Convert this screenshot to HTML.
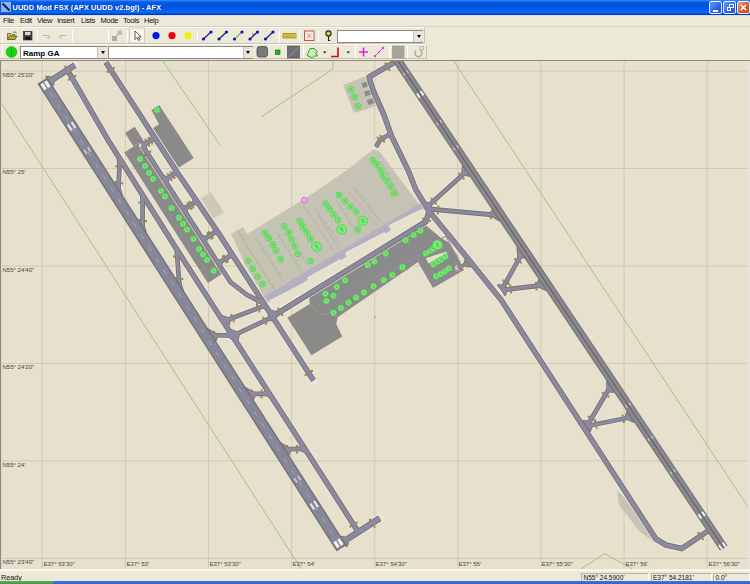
<!DOCTYPE html>
<html><head><meta charset="utf-8">
<style>
*{margin:0;padding:0;box-sizing:border-box}
html,body{width:750px;height:584px;overflow:hidden;background:#ECE9D8;font-family:"Liberation Sans",sans-serif}
.a{position:absolute}
#title{left:0;top:0;width:750px;height:15px;background:linear-gradient(#3d94ff 0px,#1668f0 1.3px,#0056e2 3px,#0055e0 8px,#0862f4 11px,#0a68f8 12.5px,#0044bc 14px,#003fae 15px)}
#title .t{left:12.5px;top:3px;color:#fff;font-size:7.4px;font-weight:bold;white-space:nowrap;letter-spacing:0.1px;text-shadow:1px 0 0 rgba(10,30,120,.5)}
.tb{top:1px;width:12.5px;height:12.5px;border:1px solid #e6eeff;border-radius:2px;background:linear-gradient(135deg,#6b9cf8,#2a64e4 60%,#2259d8)}
#menu{left:0;top:15px;width:750px;height:12px;background:#ECE9D8;border-bottom:1px solid #d8d4c2;border-top:1px solid #d4dcf0}
#menu span{position:absolute;top:0px;font-size:7.6px;color:#111;white-space:nowrap;letter-spacing:-0.3px}
.bar{left:0;width:750px;background:#ECE9D8;border-top:1px solid #fbfaf4;border-bottom:1px solid #c9c5b3}
.grip{width:1px;background:#c5c1ad;border-right:1px solid #fff}
.sep{width:1px;height:12px;background:#c5c1ad;border-right:1px solid #fff}
.combo{background:#fff;border:1px solid #7f9db9}
.dd{width:10px;background:#e8e6dc;border-left:1px solid #c8c4b4}
.dd:after{content:"";position:absolute;left:2.5px;top:4px;border-left:2.5px solid transparent;border-right:2.5px solid transparent;border-top:3px solid #000}
.dot{border-radius:50%}
#map{left:0;top:60px;width:750px;height:510px;background:#E6E0CD;overflow:hidden}
#status{left:0;top:570px;width:750px;height:11px;background:#ECE9D8;border-top:1px solid #fbfaf2}
#status span{position:absolute;font-size:6.5px;color:#111;white-space:nowrap}
.pan{top:2px;height:9px;border:1px solid #b8b4a2;border-right-color:#fff;border-bottom-color:#fff}
#task{left:0;top:581px;width:750px;height:3px;background:linear-gradient(#3a78e0,#2a62d6)}
.lab{position:absolute;font-size:6.1px;color:#4a4840;white-space:nowrap;letter-spacing:-0.05px}
</style></head><body>
<div id="title" class="a">
  <svg class="a" style="left:1px;top:2px" width="10" height="10" viewBox="0 0 10 10"><rect x="0" y="0" width="10" height="10" fill="#8fb0ee"/><line x1="1.5" y1="1.5" x2="8.5" y2="8.5" stroke="#102050" stroke-width="2"/></svg>
  <div class="t a">UUDD Mod FSX (APX UUDD v2.bgl) - AFX</div>
  <div class="tb a" style="left:709px"><div class="a" style="left:3px;top:7.5px;width:4.5px;height:2px;background:#fff"></div></div>
  <div class="tb a" style="left:723px"><div class="a" style="left:5px;top:2px;width:4.5px;height:4px;border:1px solid #fff;border-top-width:1.5px"></div><div class="a" style="left:2.5px;top:4.5px;width:4.5px;height:4px;border:1px solid #fff;border-top-width:1.5px;background:#3a70e8"></div></div>
  <div class="tb a" style="left:737px;background:linear-gradient(135deg,#f0a07c,#de5a2c 55%,#c84820)"><svg class="a" style="left:2px;top:2px" width="7" height="7"><path d="M0.8 0.8L6.2 6.2M6.2 0.8L0.8 6.2" stroke="#fff" stroke-width="1.4"/></svg></div>
</div>
<div id="menu" class="a">
  <span style="left:3px">File</span><span style="left:20px">Edit</span><span style="left:37px">View</span><span style="left:57px">Insert</span><span style="left:81px">Lists</span><span style="left:100.5px">Mode</span><span style="left:123px">Tools</span><span style="left:144px">Help</span>
</div>
<!-- toolbar 1 -->
<div class="a bar" style="top:27px;height:17px;width:425px;border-right:1px solid #c9c5b3">
  <div class="a grip" style="left:2px;top:2px;height:13px"></div>
  <svg class="a" style="left:0;top:-1px" width="750" height="17" viewBox="0 27 750 17">
    <!-- open -->
    <path d="M7.5 33.5h3.5l1 1h3v5h-7.5z" fill="#d8c060" stroke="#6a5a20" stroke-width="0.8"/>
    <path d="M7.5 39.5l2-3.5h7.5l-2 3.5z" fill="#a8b040" stroke="#5a5a20" stroke-width="0.8"/>
    <path d="M13 32.5q2-1.5 3.5 0.5" fill="none" stroke="#3a8a3a" stroke-width="1"/>
    <!-- save -->
    <rect x="23.5" y="31.5" width="8.5" height="8.5" fill="#3a3a3a" stroke="#222" stroke-width="0.6"/>
    <rect x="25" y="32" width="5.5" height="3.2" fill="#d8d8d0"/>
    <rect x="25.5" y="37" width="4.5" height="2.5" fill="#111"/>
    <!-- undo/redo gray -->
    <path d="M43 35.5h6v2.5h-2" fill="none" stroke="#b8b5a8" stroke-width="1"/>
    <path d="M66 35.5h-6v2.5h2" fill="none" stroke="#b8b5a8" stroke-width="1"/>
    <!-- gray squares -->
    <rect x="112" y="36" width="5" height="5" fill="#b0ada2"/><rect x="117.5" y="30.5" width="4.5" height="4.5" fill="#c0bdb2"/><path d="M116 36l3-2" stroke="#b0ada2"/>
    <!-- pressed button -->
    <rect x="129.5" y="28" width="15" height="15" fill="#f6f5f0" stroke="#c8c4b4" stroke-width="0.8"/>
    <path d="M135 31v8.5l2-2 1.6 3 1.3-0.6-1.5-3h2.8z" fill="#fff" stroke="#333" stroke-width="0.8"/>
    <circle cx="156" cy="35.6" r="3.6" fill="#0018e8"/>
    <circle cx="172" cy="35.6" r="3.6" fill="#ee0010"/>
    <circle cx="188" cy="35.6" r="3.6" fill="#f2ee10"/>
    <!-- line icons -->
    <g stroke-width="1.3">
      <line x1="203.5" y1="39" x2="211" y2="32" stroke="#1a2aa0"/><circle cx="203.5" cy="39" r="1.6" fill="#1010c0"/><circle cx="211" cy="32" r="1.6" fill="#1010c0"/>
      <line x1="219" y1="39" x2="226.5" y2="32" stroke="#1a2a70"/><circle cx="219" cy="39" r="1.6" fill="#1010c0"/><circle cx="226.5" cy="32" r="1.6" fill="#1010c0"/>
      <line x1="234.5" y1="39" x2="242" y2="32" stroke="#70c070"/><circle cx="234.5" cy="39" r="1.6" fill="#1010c0"/><circle cx="242" cy="32" r="1.6" fill="#1010c0"/>
      <line x1="250" y1="39" x2="257.5" y2="32" stroke="#1a2aa0"/><circle cx="250" cy="39" r="1.6" fill="#1010c0"/><circle cx="257.5" cy="32" r="1.6" fill="#1010c0"/><path d="M252 33l3 3m0-3l-3 3" stroke="#8a7a20" stroke-width="0.8"/>
      <line x1="265.5" y1="39" x2="273" y2="32" stroke="#1a2aa0"/><circle cx="265.5" cy="39" r="1.6" fill="#1010c0"/><circle cx="273" cy="32" r="1.6" fill="#1010c0"/>
    </g>
    <rect x="283" y="33.5" width="13" height="4.5" fill="#e8d840" stroke="#7a6a10" stroke-width="0.6"/>
    <path d="M284.5 35h10M284.5 36.8h10" stroke="#5a4a10" stroke-width="0.6" stroke-dasharray="1.2 0.8"/>
    <rect x="304.5" y="31" width="9.5" height="9.5" fill="#f4f0e8" stroke="#d05040" stroke-width="1"/>
    <path d="M307 33.5l4.5 4.5m0-4.5l-4.5 4.5" stroke="#d06050" stroke-width="0.8"/>
    <circle cx="328.5" cy="33.5" r="2.6" fill="#d8c850" stroke="#222" stroke-width="1.1"/>
    <path d="M328.5 36v4.5h1.8" stroke="#222" stroke-width="1.1" fill="none"/>
  </svg>
  <div class="a sep" style="left:37px;top:2px"></div>
  <div class="a sep" style="left:72px;top:2px"></div>
  <div class="a sep" style="left:108px;top:2px"></div>
  <div class="a sep" style="left:127px;top:2px"></div>
  <div class="a sep" style="left:197px;top:2px"></div>
  <div class="a sep" style="left:279px;top:2px"></div>
  <div class="a sep" style="left:299px;top:2px"></div>
  <div class="a sep" style="left:318px;top:2px"></div>
  <div class="a combo" style="left:337px;top:2px;width:86px;height:13px;border-color:#8c8a80"><div class="a dd" style="left:75px;top:0;height:11px"></div></div>
</div>
<!-- toolbar 2 -->
<div class="a bar" style="top:44px;height:15px;width:427px;border-right:1px solid #c9c5b3">
  <div class="a grip" style="left:2px;top:1px;height:12px"></div>
  <svg class="a" style="left:0;top:-1px" width="750" height="15" viewBox="0 44 750 15">
    <circle cx="11.5" cy="52" r="5.4" fill="#14d814" stroke="#0a9a0a" stroke-width="0.5"/>
    <path d="M11.5 48.5v6.5" stroke="#0a7a0a" stroke-width="0.6"/>
    <rect x="257" y="46.5" width="10.5" height="10.5" rx="2.5" fill="#7a7a7a" stroke="#4a4a4a" stroke-width="0.8"/>
    <rect x="275.5" y="50" width="4.5" height="4.5" fill="#2ab02a" stroke="#106010" stroke-width="0.6"/>
    <rect x="287.5" y="46" width="12" height="12" fill="#6e6e74" stroke="#444" stroke-width="0.6"/>
    <line x1="288.5" y1="57" x2="298.5" y2="47" stroke="#a0a0b0" stroke-width="0.8"/>
    <path d="M307 55.5l3-7h4l3.5 3-2 1.5 2 3h-3l-2 2z" fill="#c8f0b0" stroke="#30a030" stroke-width="1"/>
    <path d="M323 51.5h3.5l-1.75 2z" fill="#222"/>
    <path d="M338 47.5v9h-7" fill="none" stroke="#c01010" stroke-width="1.6"/>
    <path d="M346.5 51.5h3.5l-1.75 2z" fill="#222"/>
    <path d="M363.5 47.5v9M359 52h9" stroke="#e020e0" stroke-width="1.6"/>
    <line x1="374" y1="57" x2="384" y2="47" stroke="#e040e0" stroke-width="1"/><circle cx="375" cy="56" r="1.3" fill="#e040e0"/><circle cx="383" cy="48" r="1.3" fill="#e040e0"/><circle cx="379" cy="52" r="1" fill="#e040e0"/>
    <rect x="392.5" y="46" width="11.5" height="12" fill="#a8a598" stroke="#908d80" stroke-width="0.6"/>
    <path d="M416 50.5a3.5 3.5 0 1 0 4 -0.5" fill="none" stroke="#a8a598" stroke-width="1.3"/>
    <rect x="420" y="46.5" width="3.5" height="3.5" fill="none" stroke="#b8b5a8" stroke-width="0.8"/>
  </svg>
  <div class="a combo" style="left:20px;top:1px;width:87px;height:13px;border-color:#8c8a80"><span class="a" style="left:2px;top:1.5px;font-size:8px;font-weight:bold;color:#000;white-space:nowrap">Ramp GA</span><div class="a dd" style="left:76px;top:0;height:11px"></div></div>
  <div class="a combo" style="left:108px;top:1px;width:145px;height:13px;border-color:#8c8a80"><div class="a dd" style="left:133.5px;top:0;height:11px"></div></div>
  <div class="a sep" style="left:303px;top:1px"></div>
  <div class="a sep" style="left:355px;top:1px"></div>
  <div class="a sep" style="left:389px;top:1px"></div>
  <div class="a sep" style="left:407px;top:1px"></div>
</div>
<div id="map" class="a">
<svg width="750" height="510" viewBox="0 60 750 510" style="position:absolute;left:0;top:0"><line x1="42.2" y1="60" x2="42.2" y2="570" stroke="#cfc9b5" stroke-width="1"/><line x1="125.4" y1="60" x2="125.4" y2="570" stroke="#cfc9b5" stroke-width="1"/><line x1="208.5" y1="60" x2="208.5" y2="570" stroke="#cfc9b5" stroke-width="1"/><line x1="291.6" y1="60" x2="291.6" y2="570" stroke="#cfc9b5" stroke-width="1"/><line x1="374.7" y1="60" x2="374.7" y2="570" stroke="#cfc9b5" stroke-width="1"/><line x1="457.9" y1="60" x2="457.9" y2="570" stroke="#cfc9b5" stroke-width="1"/><line x1="541.0" y1="60" x2="541.0" y2="570" stroke="#cfc9b5" stroke-width="1"/><line x1="624.1" y1="60" x2="624.1" y2="570" stroke="#cfc9b5" stroke-width="1"/><line x1="707.2" y1="60" x2="707.2" y2="570" stroke="#cfc9b5" stroke-width="1"/><line x1="0" y1="71.0" x2="750" y2="71.0" stroke="#cfc9b5" stroke-width="1"/><line x1="0" y1="168.5" x2="750" y2="168.5" stroke="#cfc9b5" stroke-width="1"/><line x1="0" y1="266.0" x2="750" y2="266.0" stroke="#cfc9b5" stroke-width="1"/><line x1="0" y1="363.4" x2="750" y2="363.4" stroke="#cfc9b5" stroke-width="1"/><line x1="0" y1="460.9" x2="750" y2="460.9" stroke="#cfc9b5" stroke-width="1"/><line x1="0" y1="558.4" x2="750" y2="558.4" stroke="#cfc9b5" stroke-width="1"/><polyline points="0,101 302,570" fill="none" stroke="#9cc487" stroke-width="1"/><polyline points="162,60 220,145" fill="none" stroke="#9cc487" stroke-width="1"/><polyline points="261,117 333,69 333,60" fill="none" stroke="#9cc487" stroke-width="1"/><polyline points="453,60 750,510" fill="none" stroke="#9cc487" stroke-width="1"/><polyline points="578,571 604.8,553.6 636,571" fill="none" stroke="#9cc487" stroke-width="1"/><g transform="translate(38.4,84.0) rotate(57.389) scale(1,-1)"><polygon points="83,81 83,90.5 146,91 146,73 99,72.5 99,80" fill="#8a8a89" /><rect x="184" y="75" width="24" height="12" fill="#cdc9b9" /><rect x="88" y="46.5" width="16" height="11.5" fill="#8a8a89" /><rect x="104" y="35.5" width="155" height="19.5" fill="#8a8a89" /></g><polygon points="231,234 243,227 247,234 306,198 350,168 376,147 419,204 268,297 265,299 244,262" fill="#c5c4b4" /><polygon points="343,85 366,76 376,106 354,113" fill="#c5c4b4" /><rect x="362.0" y="82.0" width="7" height="5" fill="#8e8d84" transform="rotate(-20 365.5 84.5)"/><rect x="364.5" y="90.5" width="7" height="5" fill="#8e8d84" transform="rotate(-20 368 93)"/><rect x="367.5" y="99.0" width="7" height="5" fill="#8e8d84" transform="rotate(-20 371 101.5)"/><polyline points="263,302 425,205" fill="none" stroke="#b4b0c2" stroke-width="8"/><polygon points="309,294 422,222 441,238 448,242 457,255 464,270 433,288 418,262 338,317 320,313.4 309.7,304" fill="#8a8a89" /><polygon points="270,301 301.6,284.7 306.2,291.6 273.9,310.1" fill="#e6e0cd" stroke="#e9e4d2" stroke-width="1.5" stroke-linejoin="round"/><polygon points="307.8,277.8 340.1,260 344,267 310.8,285.5" fill="#e6e0cd" stroke="#e9e4d2" stroke-width="1.5" stroke-linejoin="round"/><polygon points="346,252.8 384.3,233 388,239.6 349,260.2" fill="#e6e0cd" stroke="#e9e4d2" stroke-width="1.5" stroke-linejoin="round"/><polygon points="389.4,225.7 422.4,209.5 426,216 393,232.3" fill="#e6e0cd" stroke="#e9e4d2" stroke-width="1.5" stroke-linejoin="round"/><polygon points="425.8,258.2 446.4,251.4 448,256.5 428.4,263.4" fill="#e6e0cd" /><polygon points="287.4,317.7 309.7,304 320,313.4 337.9,316.8 336.2,323.7 342.2,336.5 311.4,355.3" fill="#8a8a89" /><polygon points="617,490 619,505 640,532 655,542 636,510" fill="#c5c4b4" /><g transform="translate(38.4,84.0) rotate(57.389) scale(1,-1)"><polyline points="3.8,32 84,28.5 220,27.4 488,28 549.8,28" fill="none" stroke="#f2efdc" stroke-width="7.80" stroke-linejoin="round" stroke-linecap="round" opacity="0.6"/><polyline points="3.8,4 3.8,41" fill="none" stroke="#f2efdc" stroke-width="8.60" stroke-linejoin="round" stroke-linecap="round" opacity="0.6"/><polyline points="549.8,4 549.8,53.5" fill="none" stroke="#f2efdc" stroke-width="8.60" stroke-linejoin="round" stroke-linecap="round" opacity="0.6"/><polyline points="371,5 386,28.5" fill="none" stroke="#f2efdc" stroke-width="7.00" stroke-linejoin="round" stroke-linecap="round" opacity="0.6"/><polyline points="437,5 451.5,28.5" fill="none" stroke="#f2efdc" stroke-width="7.00" stroke-linejoin="round" stroke-linecap="round" opacity="0.6"/><polyline points="105,28.5 113,24 134,9" fill="none" stroke="#f2efdc" stroke-width="7.00" stroke-linejoin="round" stroke-linecap="round" opacity="0.6"/><polyline points="148,28.5 156,24 179,9" fill="none" stroke="#f2efdc" stroke-width="7.00" stroke-linejoin="round" stroke-linecap="round" opacity="0.6"/><polyline points="212,28.5 220,24 248,9" fill="none" stroke="#f2efdc" stroke-width="7.00" stroke-linejoin="round" stroke-linecap="round" opacity="0.6"/><polyline points="108,54.5 270,55 290,62 309,73" fill="none" stroke="#f2efdc" stroke-width="7.00" stroke-linejoin="round" stroke-linecap="round" opacity="0.6"/><polyline points="18,68.5 150,69.3 220,71.3 398,72" fill="none" stroke="#f2efdc" stroke-width="7.80" stroke-linejoin="round" stroke-linecap="round" opacity="0.6"/><polyline points="108,54.8 108,69.04545454545455" fill="none" stroke="#f2efdc" stroke-width="7.00" stroke-linejoin="round" stroke-linecap="round" opacity="0.6"/><polyline points="149,54.8 149,69.2939393939394" fill="none" stroke="#f2efdc" stroke-width="7.00" stroke-linejoin="round" stroke-linecap="round" opacity="0.6"/><polyline points="184,54.8 184,70.27142857142857" fill="none" stroke="#f2efdc" stroke-width="7.00" stroke-linejoin="round" stroke-linecap="round" opacity="0.6"/><polyline points="220,54.8 220,71.3" fill="none" stroke="#f2efdc" stroke-width="7.00" stroke-linejoin="round" stroke-linecap="round" opacity="0.6"/><polyline points="248,54.8 248,71.41011235955055" fill="none" stroke="#f2efdc" stroke-width="7.00" stroke-linejoin="round" stroke-linecap="round" opacity="0.6"/><polyline points="309,73 300,28.5" fill="none" stroke="#f2efdc" stroke-width="7.00" stroke-linejoin="round" stroke-linecap="round" opacity="0.6"/><polyline points="322.5,72 317,28.5 301,5" fill="none" stroke="#f2efdc" stroke-width="7.00" stroke-linejoin="round" stroke-linecap="round" opacity="0.6"/></g><polyline points="395,62 369,77 373,90 384,115 391.5,136 408,170 416,190 429,211 452.8,240 501.2,300 656,539 666,545 681.7,548.6 708,531" fill="none" stroke="#f2efdc" stroke-width="7.80" stroke-linejoin="round" stroke-linecap="round" opacity="0.6"/><polyline points="427,207 468,170" fill="none" stroke="#f2efdc" stroke-width="7.00" stroke-linejoin="round" stroke-linecap="round" opacity="0.6"/><polyline points="429,209 500,215.5" fill="none" stroke="#f2efdc" stroke-width="7.00" stroke-linejoin="round" stroke-linecap="round" opacity="0.6"/><polyline points="272.5,316.5 426,221.5 429,211" fill="none" stroke="#f2efdc" stroke-width="7.80" stroke-linejoin="round" stroke-linecap="round" opacity="0.6"/><polyline points="468,263 458,268" fill="none" stroke="#f2efdc" stroke-width="6.20" stroke-linejoin="round" stroke-linecap="round" opacity="0.6"/><polyline points="501.7,290 545,285" fill="none" stroke="#f2efdc" stroke-width="7.00" stroke-linejoin="round" stroke-linecap="round" opacity="0.6"/><polyline points="501.7,290 522.3,252.8" fill="none" stroke="#f2efdc" stroke-width="7.00" stroke-linejoin="round" stroke-linecap="round" opacity="0.6"/><polyline points="587,426 610,387" fill="none" stroke="#f2efdc" stroke-width="7.00" stroke-linejoin="round" stroke-linecap="round" opacity="0.6"/><polyline points="587,426 632,417" fill="none" stroke="#f2efdc" stroke-width="7.00" stroke-linejoin="round" stroke-linecap="round" opacity="0.6"/><polyline points="390,134 380,140 376,147" fill="none" stroke="#f2efdc" stroke-width="7.00" stroke-linejoin="round" stroke-linecap="round" opacity="0.6"/><g transform="translate(38.4,84.0) rotate(57.389) scale(1,-1)"><polyline points="3.8,32 84,28.5 220,27.4 488,28 549.8,28" fill="none" stroke="#747378" stroke-width="5.60" stroke-linejoin="round" stroke-linecap="butt"/><polyline points="3.8,4 3.8,41" fill="none" stroke="#747378" stroke-width="6.40" stroke-linejoin="round" stroke-linecap="butt"/><polyline points="549.8,4 549.8,53.5" fill="none" stroke="#747378" stroke-width="6.40" stroke-linejoin="round" stroke-linecap="butt"/><polyline points="371,5 386,28.5" fill="none" stroke="#747378" stroke-width="4.80" stroke-linejoin="round" stroke-linecap="butt"/><polyline points="437,5 451.5,28.5" fill="none" stroke="#747378" stroke-width="4.80" stroke-linejoin="round" stroke-linecap="butt"/><polyline points="105,28.5 113,24 134,9" fill="none" stroke="#747378" stroke-width="4.80" stroke-linejoin="round" stroke-linecap="butt"/><polyline points="148,28.5 156,24 179,9" fill="none" stroke="#747378" stroke-width="4.80" stroke-linejoin="round" stroke-linecap="butt"/><polyline points="212,28.5 220,24 248,9" fill="none" stroke="#747378" stroke-width="4.80" stroke-linejoin="round" stroke-linecap="butt"/><polyline points="108,54.5 270,55 290,62 309,73" fill="none" stroke="#747378" stroke-width="4.80" stroke-linejoin="round" stroke-linecap="butt"/><polyline points="18,68.5 150,69.3 220,71.3 398,72" fill="none" stroke="#747378" stroke-width="5.60" stroke-linejoin="round" stroke-linecap="butt"/><polyline points="108,54.8 108,69.04545454545455" fill="none" stroke="#747378" stroke-width="4.80" stroke-linejoin="round" stroke-linecap="butt"/><polyline points="149,54.8 149,69.2939393939394" fill="none" stroke="#747378" stroke-width="4.80" stroke-linejoin="round" stroke-linecap="butt"/><polyline points="184,54.8 184,70.27142857142857" fill="none" stroke="#747378" stroke-width="4.80" stroke-linejoin="round" stroke-linecap="butt"/><polyline points="220,54.8 220,71.3" fill="none" stroke="#747378" stroke-width="4.80" stroke-linejoin="round" stroke-linecap="butt"/><polyline points="248,54.8 248,71.41011235955055" fill="none" stroke="#747378" stroke-width="4.80" stroke-linejoin="round" stroke-linecap="butt"/><polyline points="309,73 300,28.5" fill="none" stroke="#747378" stroke-width="4.80" stroke-linejoin="round" stroke-linecap="butt"/><polyline points="322.5,72 317,28.5 301,5" fill="none" stroke="#747378" stroke-width="4.80" stroke-linejoin="round" stroke-linecap="butt"/><polygon points="381.8510638297872,10.5 378.154254803008,16.376711531223254 374.3510638297872,10.5" fill="#747378" stroke="#747378" stroke-width="1.6" stroke-linejoin="round"/><polygon points="366.8510638297872,10.5 378.154254803008,16.376711531223254 374.3510638297872,10.5" fill="#747378" stroke="#747378" stroke-width="1.6" stroke-linejoin="round"/><polygon points="393.5,28.5 382.2337518295469,22.59954453295688 386,28.5" fill="#747378" stroke="#747378" stroke-width="1.6" stroke-linejoin="round"/><polygon points="378.5,28.5 382.2337518295469,22.59954453295688 386,28.5" fill="#747378" stroke="#747378" stroke-width="1.6" stroke-linejoin="round"/><polygon points="447.73936170212767,10.5 443.95187607599524,16.43441126177035 440.23936170212767,10.5" fill="#747378" stroke="#747378" stroke-width="1.6" stroke-linejoin="round"/><polygon points="432.73936170212767,10.5 443.95187607599524,16.43441126177035 440.23936170212767,10.5" fill="#747378" stroke="#747378" stroke-width="1.6" stroke-linejoin="round"/><polygon points="459.0,28.5 447.82424871067377,22.542747910402284 451.5,28.5" fill="#747378" stroke="#747378" stroke-width="1.6" stroke-linejoin="round"/><polygon points="444.0,28.5 447.82424871067377,22.542747910402284 451.5,28.5" fill="#747378" stroke="#747378" stroke-width="1.6" stroke-linejoin="round"/><polygon points="312.0744680851064,10.5 308.55114435965766,16.26073309635337 304.5744680851064,10.5" fill="#747378" stroke="#747378" stroke-width="1.6" stroke-linejoin="round"/><polygon points="297.0744680851064,10.5 308.55114435965766,16.26073309635337 304.5744680851064,10.5" fill="#747378" stroke="#747378" stroke-width="1.6" stroke-linejoin="round"/><polygon points="324.5,28.5 317.87806679722564,35.44471012351199 317,28.5" fill="#747378" stroke="#747378" stroke-width="1.6" stroke-linejoin="round"/><polygon points="309.5,28.5 317.87806679722564,35.44471012351199 317,28.5" fill="#747378" stroke="#747378" stroke-width="1.6" stroke-linejoin="round"/><polygon points="324.5,28.5 313.06046316042585,22.713805266875465 317,28.5" fill="#747378" stroke="#747378" stroke-width="1.6" stroke-linejoin="round"/><polygon points="309.5,28.5 313.06046316042585,22.713805266875465 317,28.5" fill="#747378" stroke="#747378" stroke-width="1.6" stroke-linejoin="round"/><polygon points="307.5,28.5 301.3876349032152,35.361083688119464 300,28.5" fill="#747378" stroke="#747378" stroke-width="1.6" stroke-linejoin="round"/><polygon points="292.5,28.5 301.3876349032152,35.361083688119464 300,28.5" fill="#747378" stroke="#747378" stroke-width="1.6" stroke-linejoin="round"/><polygon points="315.0,73 307.8898920774279,67.51113304950442 309,73" fill="#747378" stroke="#747378" stroke-width="1.6" stroke-linejoin="round"/><polygon points="303.0,73 307.8898920774279,67.51113304950442 309,73" fill="#747378" stroke="#747378" stroke-width="1.6" stroke-linejoin="round"/><polygon points="328.5,72 321.79754656221945,66.4442319011904 322.5,72" fill="#747378" stroke="#747378" stroke-width="1.6" stroke-linejoin="round"/><polygon points="316.5,72 321.79754656221945,66.4442319011904 322.5,72" fill="#747378" stroke="#747378" stroke-width="1.6" stroke-linejoin="round"/><polygon points="138.5,10.5 125.4,14.7 131,10.5" fill="#747378" stroke="#747378" stroke-width="1.6" stroke-linejoin="round"/><polygon points="123.5,10.5 125.4,14.7 131,10.5" fill="#747378" stroke="#747378" stroke-width="1.6" stroke-linejoin="round"/><polygon points="112.5,28.5 111.10102875987184,25.068171322572088 105,28.5" fill="#747378" stroke="#747378" stroke-width="1.6" stroke-linejoin="round"/><polygon points="97.5,28.5 111.10102875987184,25.068171322572088 105,28.5" fill="#747378" stroke="#747378" stroke-width="1.6" stroke-linejoin="round"/><polygon points="155.5,28.5 154.10102875987184,25.068171322572088 148,28.5" fill="#747378" stroke="#747378" stroke-width="1.6" stroke-linejoin="round"/><polygon points="140.5,28.5 154.10102875987184,25.068171322572088 148,28.5" fill="#747378" stroke="#747378" stroke-width="1.6" stroke-linejoin="round"/><polygon points="183.5,10.5 170.19805928147048,14.416309985007437 176,10.5" fill="#747378" stroke="#747378" stroke-width="1.6" stroke-linejoin="round"/><polygon points="168.5,10.5 170.19805928147048,14.416309985007437 176,10.5" fill="#747378" stroke="#747378" stroke-width="1.6" stroke-linejoin="round"/><polygon points="219.5,28.5 218.10102875987184,25.068171322572088 212,28.5" fill="#747378" stroke="#747378" stroke-width="1.6" stroke-linejoin="round"/><polygon points="204.5,28.5 218.10102875987184,25.068171322572088 212,28.5" fill="#747378" stroke="#747378" stroke-width="1.6" stroke-linejoin="round"/><polygon points="252.5,10.5 238.84066221639966,13.826042403144188 245,10.5" fill="#747378" stroke="#747378" stroke-width="1.6" stroke-linejoin="round"/><polygon points="237.5,10.5 238.84066221639966,13.826042403144188 245,10.5" fill="#747378" stroke="#747378" stroke-width="1.6" stroke-linejoin="round"/><polygon points="9.8,10.5 3.8,16.1 3.8,10.5" fill="#747378" stroke="#747378" stroke-width="1.6" stroke-linejoin="round"/><polygon points="-2.2,10.5 3.8,16.1 3.8,10.5" fill="#747378" stroke="#747378" stroke-width="1.6" stroke-linejoin="round"/><polygon points="555.8,10.5 549.8,16.1 549.8,10.5" fill="#747378" stroke="#747378" stroke-width="1.6" stroke-linejoin="round"/><polygon points="543.8,10.5 549.8,16.1 549.8,10.5" fill="#747378" stroke="#747378" stroke-width="1.6" stroke-linejoin="round"/><polygon points="113.25,54.8 108.0,59.699999999999996 108,54.8" fill="#747378" stroke="#747378" stroke-width="1.6" stroke-linejoin="round"/><polygon points="102.75,54.8 108.0,59.699999999999996 108,54.8" fill="#747378" stroke="#747378" stroke-width="1.6" stroke-linejoin="round"/><polygon points="113.25,69.04545454545455 108.0,64.14545454545454 108,69.04545454545455" fill="#747378" stroke="#747378" stroke-width="1.6" stroke-linejoin="round"/><polygon points="102.75,69.04545454545455 108.0,64.14545454545454 108,69.04545454545455" fill="#747378" stroke="#747378" stroke-width="1.6" stroke-linejoin="round"/><polygon points="154.25,54.8 149.0,59.699999999999996 149,54.8" fill="#747378" stroke="#747378" stroke-width="1.6" stroke-linejoin="round"/><polygon points="143.75,54.8 149.0,59.699999999999996 149,54.8" fill="#747378" stroke="#747378" stroke-width="1.6" stroke-linejoin="round"/><polygon points="154.25,69.2939393939394 149.0,64.39393939393939 149,69.2939393939394" fill="#747378" stroke="#747378" stroke-width="1.6" stroke-linejoin="round"/><polygon points="143.75,69.2939393939394 149.0,64.39393939393939 149,69.2939393939394" fill="#747378" stroke="#747378" stroke-width="1.6" stroke-linejoin="round"/><polygon points="189.25,54.8 184.0,59.699999999999996 184,54.8" fill="#747378" stroke="#747378" stroke-width="1.6" stroke-linejoin="round"/><polygon points="178.75,54.8 184.0,59.699999999999996 184,54.8" fill="#747378" stroke="#747378" stroke-width="1.6" stroke-linejoin="round"/><polygon points="189.25,70.27142857142857 184.0,65.37142857142857 184,70.27142857142857" fill="#747378" stroke="#747378" stroke-width="1.6" stroke-linejoin="round"/><polygon points="178.75,70.27142857142857 184.0,65.37142857142857 184,70.27142857142857" fill="#747378" stroke="#747378" stroke-width="1.6" stroke-linejoin="round"/><polygon points="225.25,54.8 220.0,59.699999999999996 220,54.8" fill="#747378" stroke="#747378" stroke-width="1.6" stroke-linejoin="round"/><polygon points="214.75,54.8 220.0,59.699999999999996 220,54.8" fill="#747378" stroke="#747378" stroke-width="1.6" stroke-linejoin="round"/><polygon points="225.25,71.3 220.0,66.39999999999999 220,71.3" fill="#747378" stroke="#747378" stroke-width="1.6" stroke-linejoin="round"/><polygon points="214.75,71.3 220.0,66.39999999999999 220,71.3" fill="#747378" stroke="#747378" stroke-width="1.6" stroke-linejoin="round"/><polygon points="253.25,54.8 248.0,59.699999999999996 248,54.8" fill="#747378" stroke="#747378" stroke-width="1.6" stroke-linejoin="round"/><polygon points="242.75,54.8 248.0,59.699999999999996 248,54.8" fill="#747378" stroke="#747378" stroke-width="1.6" stroke-linejoin="round"/><polygon points="253.25,71.41011235955055 248.0,66.51011235955055 248,71.41011235955055" fill="#747378" stroke="#747378" stroke-width="1.6" stroke-linejoin="round"/><polygon points="242.75,71.41011235955055 248.0,66.51011235955055 248,71.41011235955055" fill="#747378" stroke="#747378" stroke-width="1.6" stroke-linejoin="round"/></g><polyline points="395,62 369,77 373,90 384,115 391.5,136 408,170 416,190 429,211 452.8,240 501.2,300 656,539 666,545 681.7,548.6 708,531" fill="none" stroke="#747378" stroke-width="5.60" stroke-linejoin="round" stroke-linecap="butt"/><polyline points="427,207 468,170" fill="none" stroke="#747378" stroke-width="4.80" stroke-linejoin="round" stroke-linecap="butt"/><polyline points="429,209 500,215.5" fill="none" stroke="#747378" stroke-width="4.80" stroke-linejoin="round" stroke-linecap="butt"/><polyline points="272.5,316.5 426,221.5 429,211" fill="none" stroke="#747378" stroke-width="5.60" stroke-linejoin="round" stroke-linecap="butt"/><polyline points="468,263 458,268" fill="none" stroke="#747378" stroke-width="4.00" stroke-linejoin="round" stroke-linecap="butt"/><polyline points="501.7,290 545,285" fill="none" stroke="#747378" stroke-width="4.80" stroke-linejoin="round" stroke-linecap="butt"/><polyline points="501.7,290 522.3,252.8" fill="none" stroke="#747378" stroke-width="4.80" stroke-linejoin="round" stroke-linecap="butt"/><polyline points="587,426 610,387" fill="none" stroke="#747378" stroke-width="4.80" stroke-linejoin="round" stroke-linecap="butt"/><polyline points="587,426 632,417" fill="none" stroke="#747378" stroke-width="4.80" stroke-linejoin="round" stroke-linecap="butt"/><polyline points="390,134 380,140 376,147" fill="none" stroke="#747378" stroke-width="4.80" stroke-linejoin="round" stroke-linecap="butt"/><polygon points="469.3304700390056,175.9899206814522 461.8838638156766,174.79843693855548 465.9987,171.0" fill="#747378" stroke="#747378" stroke-width="1.6" stroke-linejoin="round"/><polygon points="462.66692996099437,166.0100793185478 461.8838638156766,174.79843693855548 465.9987,171.0" fill="#747378" stroke="#747378" stroke-width="1.6" stroke-linejoin="round"/><polygon points="499.0431200390056,220.4899206814522 490.13774407356374,214.9569374098735 495.71135,215.5" fill="#747378" stroke="#747378" stroke-width="1.6" stroke-linejoin="round"/><polygon points="492.37957996099436,210.5100793185478 490.13774407356374,214.9569374098735 495.71135,215.5" fill="#747378" stroke="#747378" stroke-width="1.6" stroke-linejoin="round"/><polygon points="545.4482700390057,289.9899206814522 536.5588672458958,285.68754503162126 542.1165000000001,285.0" fill="#747378" stroke="#747378" stroke-width="1.6" stroke-linejoin="round"/><polygon points="538.7847299609945,280.0100793185478 536.5588672458958,285.68754503162126 542.1165000000001,285.0" fill="#747378" stroke="#747378" stroke-width="1.6" stroke-linejoin="round"/><polygon points="523.9483300390057,257.7899206814522 518.0782393940118,257.7916859377585 520.61656,252.8" fill="#747378" stroke="#747378" stroke-width="1.6" stroke-linejoin="round"/><polygon points="517.2847899609944,247.81007931854782 518.0782393940118,257.7916859377585 520.61656,252.8" fill="#747378" stroke="#747378" stroke-width="1.6" stroke-linejoin="round"/><polygon points="613.5536700390056,391.9899206814522 607.356896767335,391.81162721715003 610.2219,387.0" fill="#747378" stroke="#747378" stroke-width="1.6" stroke-linejoin="round"/><polygon points="606.8901299609944,382.0100793185478 607.356896767335,391.81162721715003 610.2219,387.0" fill="#747378" stroke="#747378" stroke-width="1.6" stroke-linejoin="round"/><polygon points="633.5846700390057,421.9899206814522 624.7703308862492,418.14080494079604 630.2529000000001,417.0" fill="#747378" stroke="#747378" stroke-width="1.6" stroke-linejoin="round"/><polygon points="626.9211299609944,412.0100793185478 624.7703308862492,418.14080494079604 630.2529000000001,417.0" fill="#747378" stroke="#747378" stroke-width="1.6" stroke-linejoin="round"/><polygon points="504.96639118572676,295.0329602245405 507.2630337524118,289.357617349606 501.7,290.0" fill="#747378" stroke="#747378" stroke-width="1.6" stroke-linejoin="round"/><polygon points="498.4336088142732,284.9670397754595 507.2630337524118,289.357617349606 501.7,290.0" fill="#747378" stroke="#747378" stroke-width="1.6" stroke-linejoin="round"/><polygon points="505.4671232065291,294.6699874461105 504.41288893940066,285.1009966725386 501.7,290.0" fill="#747378" stroke="#747378" stroke-width="1.6" stroke-linejoin="round"/><polygon points="497.9328767934709,285.3300125538895 504.41288893940066,285.1009966725386 501.7,290.0" fill="#747378" stroke="#747378" stroke-width="1.6" stroke-linejoin="round"/><polygon points="590.2663911857268,431.0329602245405 589.8447161116881,421.1763509410507 587.0,426.0" fill="#747378" stroke="#747378" stroke-width="1.6" stroke-linejoin="round"/><polygon points="583.7336088142732,420.9670397754595 589.8447161116881,421.1763509410507 587.0,426.0" fill="#747378" stroke="#747378" stroke-width="1.6" stroke-linejoin="round"/><polygon points="590.2663911857268,431.0329602245405 592.4912517838692,424.9017496432262 587.0,426.0" fill="#747378" stroke="#747378" stroke-width="1.6" stroke-linejoin="round"/><polygon points="583.7336088142732,420.9670397754595 592.4912517838692,424.9017496432262 587.0,426.0" fill="#747378" stroke="#747378" stroke-width="1.6" stroke-linejoin="round"/><polygon points="430.7671232065291,211.6699874461105 430.9597979746447,203.04020202535534 427.0,207.0" fill="#747378" stroke="#747378" stroke-width="1.6" stroke-linejoin="round"/><polygon points="423.2328767934709,202.3300125538895 430.9597979746447,203.04020202535534 427.0,207.0" fill="#747378" stroke="#747378" stroke-width="1.6" stroke-linejoin="round"/><polygon points="470.44979338929505,266.77472016840534 464.24340579780034,264.8782971010998 468.0,263.0" fill="#747378" stroke="#747378" stroke-width="1.6" stroke-linejoin="round"/><polygon points="465.55020661070495,259.22527983159466 464.24340579780034,264.8782971010998 468.0,263.0" fill="#747378" stroke="#747378" stroke-width="1.6" stroke-linejoin="round"/><polygon points="275.7277096646392,320.05785431984697 277.2618153495258,312.05294815501657 272.5,315.0" fill="#747378" stroke="#747378" stroke-width="1.6" stroke-linejoin="round"/><polygon points="269.2722903353608,309.94214568015303 277.2618153495258,312.05294815501657 272.5,315.0" fill="#747378" stroke="#747378" stroke-width="1.6" stroke-linejoin="round"/><g transform="translate(38.4,84.0) rotate(57.389) scale(1,-1)"><polyline points="3.8,32 84,28.5 220,27.4 488,28 549.8,28" fill="none" stroke="#8d8aa0" stroke-width="3.80" stroke-linejoin="round" stroke-linecap="butt"/><polyline points="3.8,4 3.8,41" fill="none" stroke="#8d8aa0" stroke-width="4.60" stroke-linejoin="round" stroke-linecap="butt"/><polyline points="549.8,4 549.8,53.5" fill="none" stroke="#8d8aa0" stroke-width="4.60" stroke-linejoin="round" stroke-linecap="butt"/><polyline points="371,5 386,28.5" fill="none" stroke="#8d8aa0" stroke-width="3.00" stroke-linejoin="round" stroke-linecap="butt"/><polyline points="437,5 451.5,28.5" fill="none" stroke="#8d8aa0" stroke-width="3.00" stroke-linejoin="round" stroke-linecap="butt"/><polyline points="105,28.5 113,24 134,9" fill="none" stroke="#8d8aa0" stroke-width="3.00" stroke-linejoin="round" stroke-linecap="butt"/><polyline points="148,28.5 156,24 179,9" fill="none" stroke="#8d8aa0" stroke-width="3.00" stroke-linejoin="round" stroke-linecap="butt"/><polyline points="212,28.5 220,24 248,9" fill="none" stroke="#8d8aa0" stroke-width="3.00" stroke-linejoin="round" stroke-linecap="butt"/><polyline points="108,54.5 270,55 290,62 309,73" fill="none" stroke="#8d8aa0" stroke-width="3.00" stroke-linejoin="round" stroke-linecap="butt"/><polyline points="18,68.5 150,69.3 220,71.3 398,72" fill="none" stroke="#8d8aa0" stroke-width="3.80" stroke-linejoin="round" stroke-linecap="butt"/><polyline points="108,54.8 108,69.04545454545455" fill="none" stroke="#8d8aa0" stroke-width="3.00" stroke-linejoin="round" stroke-linecap="butt"/><polyline points="149,54.8 149,69.2939393939394" fill="none" stroke="#8d8aa0" stroke-width="3.00" stroke-linejoin="round" stroke-linecap="butt"/><polyline points="184,54.8 184,70.27142857142857" fill="none" stroke="#8d8aa0" stroke-width="3.00" stroke-linejoin="round" stroke-linecap="butt"/><polyline points="220,54.8 220,71.3" fill="none" stroke="#8d8aa0" stroke-width="3.00" stroke-linejoin="round" stroke-linecap="butt"/><polyline points="248,54.8 248,71.41011235955055" fill="none" stroke="#8d8aa0" stroke-width="3.00" stroke-linejoin="round" stroke-linecap="butt"/><polyline points="309,73 300,28.5" fill="none" stroke="#8d8aa0" stroke-width="3.00" stroke-linejoin="round" stroke-linecap="butt"/><polyline points="322.5,72 317,28.5 301,5" fill="none" stroke="#8d8aa0" stroke-width="3.00" stroke-linejoin="round" stroke-linecap="butt"/><polygon points="381.8510638297872,10.5 378.154254803008,16.376711531223254 374.3510638297872,10.5" fill="#8d8aa0" /><polygon points="366.8510638297872,10.5 378.154254803008,16.376711531223254 374.3510638297872,10.5" fill="#8d8aa0" /><polygon points="393.5,28.5 382.2337518295469,22.59954453295688 386,28.5" fill="#8d8aa0" /><polygon points="378.5,28.5 382.2337518295469,22.59954453295688 386,28.5" fill="#8d8aa0" /><polygon points="447.73936170212767,10.5 443.95187607599524,16.43441126177035 440.23936170212767,10.5" fill="#8d8aa0" /><polygon points="432.73936170212767,10.5 443.95187607599524,16.43441126177035 440.23936170212767,10.5" fill="#8d8aa0" /><polygon points="459.0,28.5 447.82424871067377,22.542747910402284 451.5,28.5" fill="#8d8aa0" /><polygon points="444.0,28.5 447.82424871067377,22.542747910402284 451.5,28.5" fill="#8d8aa0" /><polygon points="312.0744680851064,10.5 308.55114435965766,16.26073309635337 304.5744680851064,10.5" fill="#8d8aa0" /><polygon points="297.0744680851064,10.5 308.55114435965766,16.26073309635337 304.5744680851064,10.5" fill="#8d8aa0" /><polygon points="324.5,28.5 317.87806679722564,35.44471012351199 317,28.5" fill="#8d8aa0" /><polygon points="309.5,28.5 317.87806679722564,35.44471012351199 317,28.5" fill="#8d8aa0" /><polygon points="324.5,28.5 313.06046316042585,22.713805266875465 317,28.5" fill="#8d8aa0" /><polygon points="309.5,28.5 313.06046316042585,22.713805266875465 317,28.5" fill="#8d8aa0" /><polygon points="307.5,28.5 301.3876349032152,35.361083688119464 300,28.5" fill="#8d8aa0" /><polygon points="292.5,28.5 301.3876349032152,35.361083688119464 300,28.5" fill="#8d8aa0" /><polygon points="315.0,73 307.8898920774279,67.51113304950442 309,73" fill="#8d8aa0" /><polygon points="303.0,73 307.8898920774279,67.51113304950442 309,73" fill="#8d8aa0" /><polygon points="328.5,72 321.79754656221945,66.4442319011904 322.5,72" fill="#8d8aa0" /><polygon points="316.5,72 321.79754656221945,66.4442319011904 322.5,72" fill="#8d8aa0" /><polygon points="138.5,10.5 125.4,14.7 131,10.5" fill="#8d8aa0" /><polygon points="123.5,10.5 125.4,14.7 131,10.5" fill="#8d8aa0" /><polygon points="112.5,28.5 111.10102875987184,25.068171322572088 105,28.5" fill="#8d8aa0" /><polygon points="97.5,28.5 111.10102875987184,25.068171322572088 105,28.5" fill="#8d8aa0" /><polygon points="155.5,28.5 154.10102875987184,25.068171322572088 148,28.5" fill="#8d8aa0" /><polygon points="140.5,28.5 154.10102875987184,25.068171322572088 148,28.5" fill="#8d8aa0" /><polygon points="183.5,10.5 170.19805928147048,14.416309985007437 176,10.5" fill="#8d8aa0" /><polygon points="168.5,10.5 170.19805928147048,14.416309985007437 176,10.5" fill="#8d8aa0" /><polygon points="219.5,28.5 218.10102875987184,25.068171322572088 212,28.5" fill="#8d8aa0" /><polygon points="204.5,28.5 218.10102875987184,25.068171322572088 212,28.5" fill="#8d8aa0" /><polygon points="252.5,10.5 238.84066221639966,13.826042403144188 245,10.5" fill="#8d8aa0" /><polygon points="237.5,10.5 238.84066221639966,13.826042403144188 245,10.5" fill="#8d8aa0" /><polygon points="9.8,10.5 3.8,16.1 3.8,10.5" fill="#8d8aa0" /><polygon points="-2.2,10.5 3.8,16.1 3.8,10.5" fill="#8d8aa0" /><polygon points="555.8,10.5 549.8,16.1 549.8,10.5" fill="#8d8aa0" /><polygon points="543.8,10.5 549.8,16.1 549.8,10.5" fill="#8d8aa0" /><polygon points="113.25,54.8 108.0,59.699999999999996 108,54.8" fill="#8d8aa0" /><polygon points="102.75,54.8 108.0,59.699999999999996 108,54.8" fill="#8d8aa0" /><polygon points="113.25,69.04545454545455 108.0,64.14545454545454 108,69.04545454545455" fill="#8d8aa0" /><polygon points="102.75,69.04545454545455 108.0,64.14545454545454 108,69.04545454545455" fill="#8d8aa0" /><polygon points="154.25,54.8 149.0,59.699999999999996 149,54.8" fill="#8d8aa0" /><polygon points="143.75,54.8 149.0,59.699999999999996 149,54.8" fill="#8d8aa0" /><polygon points="154.25,69.2939393939394 149.0,64.39393939393939 149,69.2939393939394" fill="#8d8aa0" /><polygon points="143.75,69.2939393939394 149.0,64.39393939393939 149,69.2939393939394" fill="#8d8aa0" /><polygon points="189.25,54.8 184.0,59.699999999999996 184,54.8" fill="#8d8aa0" /><polygon points="178.75,54.8 184.0,59.699999999999996 184,54.8" fill="#8d8aa0" /><polygon points="189.25,70.27142857142857 184.0,65.37142857142857 184,70.27142857142857" fill="#8d8aa0" /><polygon points="178.75,70.27142857142857 184.0,65.37142857142857 184,70.27142857142857" fill="#8d8aa0" /><polygon points="225.25,54.8 220.0,59.699999999999996 220,54.8" fill="#8d8aa0" /><polygon points="214.75,54.8 220.0,59.699999999999996 220,54.8" fill="#8d8aa0" /><polygon points="225.25,71.3 220.0,66.39999999999999 220,71.3" fill="#8d8aa0" /><polygon points="214.75,71.3 220.0,66.39999999999999 220,71.3" fill="#8d8aa0" /><polygon points="253.25,54.8 248.0,59.699999999999996 248,54.8" fill="#8d8aa0" /><polygon points="242.75,54.8 248.0,59.699999999999996 248,54.8" fill="#8d8aa0" /><polygon points="253.25,71.41011235955055 248.0,66.51011235955055 248,71.41011235955055" fill="#8d8aa0" /><polygon points="242.75,71.41011235955055 248.0,66.51011235955055 248,71.41011235955055" fill="#8d8aa0" /></g><polyline points="395,62 369,77 373,90 384,115 391.5,136 408,170 416,190 429,211 452.8,240 501.2,300 656,539 666,545 681.7,548.6 708,531" fill="none" stroke="#8d8aa0" stroke-width="3.80" stroke-linejoin="round" stroke-linecap="butt"/><polyline points="427,207 468,170" fill="none" stroke="#8d8aa0" stroke-width="3.00" stroke-linejoin="round" stroke-linecap="butt"/><polyline points="429,209 500,215.5" fill="none" stroke="#8d8aa0" stroke-width="3.00" stroke-linejoin="round" stroke-linecap="butt"/><polyline points="272.5,316.5 426,221.5 429,211" fill="none" stroke="#8d8aa0" stroke-width="3.80" stroke-linejoin="round" stroke-linecap="butt"/><polyline points="468,263 458,268" fill="none" stroke="#8d8aa0" stroke-width="2.20" stroke-linejoin="round" stroke-linecap="butt"/><polyline points="501.7,290 545,285" fill="none" stroke="#8d8aa0" stroke-width="3.00" stroke-linejoin="round" stroke-linecap="butt"/><polyline points="501.7,290 522.3,252.8" fill="none" stroke="#8d8aa0" stroke-width="3.00" stroke-linejoin="round" stroke-linecap="butt"/><polyline points="587,426 610,387" fill="none" stroke="#8d8aa0" stroke-width="3.00" stroke-linejoin="round" stroke-linecap="butt"/><polyline points="587,426 632,417" fill="none" stroke="#8d8aa0" stroke-width="3.00" stroke-linejoin="round" stroke-linecap="butt"/><polyline points="390,134 380,140 376,147" fill="none" stroke="#8d8aa0" stroke-width="3.00" stroke-linejoin="round" stroke-linecap="butt"/><polygon points="469.3304700390056,175.9899206814522 461.8838638156766,174.79843693855548 465.9987,171.0" fill="#8d8aa0" /><polygon points="462.66692996099437,166.0100793185478 461.8838638156766,174.79843693855548 465.9987,171.0" fill="#8d8aa0" /><polygon points="499.0431200390056,220.4899206814522 490.13774407356374,214.9569374098735 495.71135,215.5" fill="#8d8aa0" /><polygon points="492.37957996099436,210.5100793185478 490.13774407356374,214.9569374098735 495.71135,215.5" fill="#8d8aa0" /><polygon points="545.4482700390057,289.9899206814522 536.5588672458958,285.68754503162126 542.1165000000001,285.0" fill="#8d8aa0" /><polygon points="538.7847299609945,280.0100793185478 536.5588672458958,285.68754503162126 542.1165000000001,285.0" fill="#8d8aa0" /><polygon points="523.9483300390057,257.7899206814522 518.0782393940118,257.7916859377585 520.61656,252.8" fill="#8d8aa0" /><polygon points="517.2847899609944,247.81007931854782 518.0782393940118,257.7916859377585 520.61656,252.8" fill="#8d8aa0" /><polygon points="613.5536700390056,391.9899206814522 607.356896767335,391.81162721715003 610.2219,387.0" fill="#8d8aa0" /><polygon points="606.8901299609944,382.0100793185478 607.356896767335,391.81162721715003 610.2219,387.0" fill="#8d8aa0" /><polygon points="633.5846700390057,421.9899206814522 624.7703308862492,418.14080494079604 630.2529000000001,417.0" fill="#8d8aa0" /><polygon points="626.9211299609944,412.0100793185478 624.7703308862492,418.14080494079604 630.2529000000001,417.0" fill="#8d8aa0" /><polygon points="504.96639118572676,295.0329602245405 507.2630337524118,289.357617349606 501.7,290.0" fill="#8d8aa0" /><polygon points="498.4336088142732,284.9670397754595 507.2630337524118,289.357617349606 501.7,290.0" fill="#8d8aa0" /><polygon points="505.4671232065291,294.6699874461105 504.41288893940066,285.1009966725386 501.7,290.0" fill="#8d8aa0" /><polygon points="497.9328767934709,285.3300125538895 504.41288893940066,285.1009966725386 501.7,290.0" fill="#8d8aa0" /><polygon points="590.2663911857268,431.0329602245405 589.8447161116881,421.1763509410507 587.0,426.0" fill="#8d8aa0" /><polygon points="583.7336088142732,420.9670397754595 589.8447161116881,421.1763509410507 587.0,426.0" fill="#8d8aa0" /><polygon points="590.2663911857268,431.0329602245405 592.4912517838692,424.9017496432262 587.0,426.0" fill="#8d8aa0" /><polygon points="583.7336088142732,420.9670397754595 592.4912517838692,424.9017496432262 587.0,426.0" fill="#8d8aa0" /><polygon points="430.7671232065291,211.6699874461105 430.9597979746447,203.04020202535534 427.0,207.0" fill="#8d8aa0" /><polygon points="423.2328767934709,202.3300125538895 430.9597979746447,203.04020202535534 427.0,207.0" fill="#8d8aa0" /><polygon points="470.44979338929505,266.77472016840534 464.24340579780034,264.8782971010998 468.0,263.0" fill="#8d8aa0" /><polygon points="465.55020661070495,259.22527983159466 464.24340579780034,264.8782971010998 468.0,263.0" fill="#8d8aa0" /><polygon points="275.7277096646392,320.05785431984697 277.2618153495258,312.05294815501657 272.5,315.0" fill="#8d8aa0" /><polygon points="269.2722903353608,309.94214568015303 277.2618153495258,312.05294815501657 272.5,315.0" fill="#8d8aa0" /><g transform="translate(38.4,84.0) rotate(57.389) scale(1,-1)"><rect x="0" y="0" width="553.7" height="10.5" fill="#88879a" stroke="#707074" stroke-width="1.3"/><line x1="14" y1="5.25" x2="540" y2="5.25" stroke="#aeaeba" stroke-width="0.8" stroke-dasharray="5 9"/><rect x="1.5" y="1.5" width="7.0" height="3.0" fill="#f4f4f4" /><rect x="1.5" y="6" width="7.0" height="3" fill="#f4f4f4" /><rect x="545" y="1.5" width="7" height="3.0" fill="#f4f4f4" /><rect x="545" y="6" width="7" height="3" fill="#f4f4f4" /><rect x="50" y="2" width="7" height="2" fill="#ececec" /><rect x="50" y="6.5" width="7" height="2.0" fill="#ececec" /><rect x="500" y="2" width="7" height="2" fill="#ececec" /><rect x="500" y="6.5" width="7" height="2.0" fill="#ececec" /><rect x="80" y="2.5" width="5" height="1.2999999999999998" fill="#dcdcdc" /><rect x="80" y="6.7" width="5" height="1.2999999999999998" fill="#dcdcdc" /><rect x="470" y="2.5" width="5" height="1.2999999999999998" fill="#dcdcdc" /><rect x="470" y="6.7" width="5" height="1.2999999999999998" fill="#dcdcdc" /></g><line x1="393.8455" y1="55" x2="723.7" y2="548" stroke="#707074" stroke-width="9"/><line x1="393.8455" y1="55" x2="723.7" y2="548" stroke="#8a8a8e" stroke-width="7"/><line x1="393.8455" y1="55" x2="723.7" y2="548" stroke="#56565c" stroke-width="1"/><g transform="translate(393.8455,55) rotate(56.21446678824749)"><rect x="45" y="-3.2" width="5" height="2" fill="#f0f0f0"/><rect x="45" y="1.2" width="5" height="2" fill="#f0f0f0"/><rect x="551.1719743634641" y="-3.2" width="5" height="2" fill="#f0f0f0"/><rect x="551.1719743634641" y="1.2" width="5" height="2" fill="#f0f0f0"/><rect x="588.1719743634641" y="-3.2" width="5" height="2" fill="#f0f0f0"/><rect x="588.1719743634641" y="1.2" width="5" height="2" fill="#f0f0f0"/><rect x="20" y="-2.6" width="3" height="1" fill="#d8d8d8"/><rect x="20" y="1.6" width="3" height="1" fill="#d8d8d8"/><rect x="80" y="-2.6" width="3" height="1" fill="#d8d8d8"/><rect x="80" y="1.6" width="3" height="1" fill="#d8d8d8"/><rect x="110" y="-2.6" width="3" height="1" fill="#d8d8d8"/><rect x="110" y="1.6" width="3" height="1" fill="#d8d8d8"/><rect x="420" y="-2.6" width="3" height="1" fill="#d8d8d8"/><rect x="420" y="1.6" width="3" height="1" fill="#d8d8d8"/><rect x="460" y="-2.6" width="3" height="1" fill="#d8d8d8"/><rect x="460" y="1.6" width="3" height="1" fill="#d8d8d8"/><rect x="500" y="-2.6" width="3" height="1" fill="#d8d8d8"/><rect x="500" y="1.6" width="3" height="1" fill="#d8d8d8"/></g><polyline points="318,306 416,257.5 438,245" fill="none" stroke="#8f8ba4" stroke-width="1.6"/><polyline points="326,312 410,268" fill="none" stroke="#8f8ba4" stroke-width="0.9" opacity="0.8"/><polyline points="318,296 410,246" fill="none" stroke="#8f8ba4" stroke-width="0.9" opacity="0.8"/><polyline points="415,252 446,236 462,268 433,284 415,252" fill="none" stroke="#8f8ba4" stroke-width="1.2" opacity="0.9"/><polyline points="104,40 258,40" fill="none" stroke="#8f8ba4" stroke-width="1" opacity="0.7" transform="translate(38.4,84) rotate(57.389) scale(1,-1)"/><line x1="237" y1="230" x2="276" y2="292" stroke="#a0b070" stroke-width="0.8" opacity="0.7"/><line x1="240.2" y1="235.1" x2="242.7" y2="233.5" stroke="#a0b070" stroke-width="0.6" opacity="0.6"/><line x1="243.4" y1="240.2" x2="245.9" y2="238.6" stroke="#a0b070" stroke-width="0.6" opacity="0.6"/><line x1="246.6" y1="245.2" x2="249.1" y2="243.6" stroke="#a0b070" stroke-width="0.6" opacity="0.6"/><line x1="249.8" y1="250.3" x2="252.3" y2="248.7" stroke="#a0b070" stroke-width="0.6" opacity="0.6"/><line x1="253.0" y1="255.4" x2="255.5" y2="253.8" stroke="#a0b070" stroke-width="0.6" opacity="0.6"/><line x1="256.2" y1="260.5" x2="258.7" y2="258.9" stroke="#a0b070" stroke-width="0.6" opacity="0.6"/><line x1="259.4" y1="265.6" x2="261.9" y2="264.0" stroke="#a0b070" stroke-width="0.6" opacity="0.6"/><line x1="262.6" y1="270.6" x2="265.1" y2="269.0" stroke="#a0b070" stroke-width="0.6" opacity="0.6"/><line x1="265.8" y1="275.7" x2="268.3" y2="274.1" stroke="#a0b070" stroke-width="0.6" opacity="0.6"/><line x1="268.9" y1="280.8" x2="271.5" y2="279.2" stroke="#a0b070" stroke-width="0.6" opacity="0.6"/><line x1="272.1" y1="285.9" x2="274.7" y2="284.3" stroke="#a0b070" stroke-width="0.6" opacity="0.6"/><line x1="256" y1="238.5" x2="284" y2="282" stroke="#98b080" stroke-width="0.8" opacity="0.7"/><line x1="259.2" y1="243.5" x2="261.8" y2="241.9" stroke="#98b080" stroke-width="0.6" opacity="0.6"/><line x1="262.5" y1="248.6" x2="265.0" y2="247.0" stroke="#98b080" stroke-width="0.6" opacity="0.6"/><line x1="265.7" y1="253.6" x2="268.3" y2="252.0" stroke="#98b080" stroke-width="0.6" opacity="0.6"/><line x1="269.0" y1="258.7" x2="271.5" y2="257.1" stroke="#98b080" stroke-width="0.6" opacity="0.6"/><line x1="272.2" y1="263.7" x2="274.8" y2="262.1" stroke="#98b080" stroke-width="0.6" opacity="0.6"/><line x1="275.5" y1="268.8" x2="278.0" y2="267.1" stroke="#98b080" stroke-width="0.6" opacity="0.6"/><line x1="278.7" y1="273.8" x2="281.3" y2="272.2" stroke="#98b080" stroke-width="0.6" opacity="0.6"/><line x1="276" y1="230.8" x2="303" y2="274" stroke="#98b080" stroke-width="0.8" opacity="0.7"/><line x1="279.2" y1="235.9" x2="281.7" y2="234.3" stroke="#98b080" stroke-width="0.6" opacity="0.6"/><line x1="282.4" y1="241.0" x2="284.9" y2="239.4" stroke="#98b080" stroke-width="0.6" opacity="0.6"/><line x1="285.5" y1="246.1" x2="288.1" y2="244.5" stroke="#98b080" stroke-width="0.6" opacity="0.6"/><line x1="288.7" y1="251.2" x2="291.3" y2="249.6" stroke="#98b080" stroke-width="0.6" opacity="0.6"/><line x1="291.9" y1="256.2" x2="294.4" y2="254.6" stroke="#98b080" stroke-width="0.6" opacity="0.6"/><line x1="295.1" y1="261.3" x2="297.6" y2="259.7" stroke="#98b080" stroke-width="0.6" opacity="0.6"/><line x1="298.3" y1="266.4" x2="300.8" y2="264.8" stroke="#98b080" stroke-width="0.6" opacity="0.6"/><line x1="304.3" y1="206.2" x2="334.2" y2="252.5" stroke="#d890c8" stroke-width="0.8" opacity="0.7"/><line x1="307.6" y1="211.2" x2="310.1" y2="209.6" stroke="#d890c8" stroke-width="0.6" opacity="0.6"/><line x1="310.8" y1="216.3" x2="313.3" y2="214.7" stroke="#d890c8" stroke-width="0.6" opacity="0.6"/><line x1="314.1" y1="221.3" x2="316.6" y2="219.7" stroke="#d890c8" stroke-width="0.6" opacity="0.6"/><line x1="317.3" y1="226.4" x2="319.8" y2="224.7" stroke="#d890c8" stroke-width="0.6" opacity="0.6"/><line x1="320.6" y1="231.4" x2="323.1" y2="229.8" stroke="#d890c8" stroke-width="0.6" opacity="0.6"/><line x1="323.8" y1="236.4" x2="326.4" y2="234.8" stroke="#d890c8" stroke-width="0.6" opacity="0.6"/><line x1="327.1" y1="241.5" x2="329.6" y2="239.9" stroke="#d890c8" stroke-width="0.6" opacity="0.6"/><line x1="330.3" y1="246.5" x2="332.9" y2="244.9" stroke="#d890c8" stroke-width="0.6" opacity="0.6"/><line x1="314.6" y1="208" x2="341" y2="245.6" stroke="#d890c8" stroke-width="0.8" opacity="0.7"/><line x1="318.0" y1="212.9" x2="320.5" y2="211.2" stroke="#d890c8" stroke-width="0.6" opacity="0.6"/><line x1="321.5" y1="217.8" x2="324.0" y2="216.1" stroke="#d890c8" stroke-width="0.6" opacity="0.6"/><line x1="324.9" y1="222.7" x2="327.4" y2="221.0" stroke="#d890c8" stroke-width="0.6" opacity="0.6"/><line x1="328.4" y1="227.6" x2="330.8" y2="225.9" stroke="#d890c8" stroke-width="0.6" opacity="0.6"/><line x1="331.8" y1="232.6" x2="334.3" y2="230.8" stroke="#d890c8" stroke-width="0.6" opacity="0.6"/><line x1="335.3" y1="237.5" x2="337.7" y2="235.7" stroke="#d890c8" stroke-width="0.6" opacity="0.6"/><line x1="348" y1="191.7" x2="377" y2="225" stroke="#d890c8" stroke-width="0.8" opacity="0.7"/><line x1="351.9" y1="196.2" x2="354.2" y2="194.3" stroke="#d890c8" stroke-width="0.6" opacity="0.6"/><line x1="355.9" y1="200.7" x2="358.1" y2="198.8" stroke="#d890c8" stroke-width="0.6" opacity="0.6"/><line x1="359.8" y1="205.3" x2="362.1" y2="203.3" stroke="#d890c8" stroke-width="0.6" opacity="0.6"/><line x1="363.8" y1="209.8" x2="366.0" y2="207.8" stroke="#d890c8" stroke-width="0.6" opacity="0.6"/><line x1="367.7" y1="214.3" x2="370.0" y2="212.4" stroke="#d890c8" stroke-width="0.6" opacity="0.6"/><line x1="371.6" y1="218.8" x2="373.9" y2="216.9" stroke="#d890c8" stroke-width="0.6" opacity="0.6"/><line x1="285" y1="228" x2="308" y2="266" stroke="#d890c8" stroke-width="0.8" opacity="0.7"/><line x1="288.1" y1="233.1" x2="290.7" y2="231.6" stroke="#d890c8" stroke-width="0.6" opacity="0.6"/><line x1="291.2" y1="238.3" x2="293.8" y2="236.7" stroke="#d890c8" stroke-width="0.6" opacity="0.6"/><line x1="294.3" y1="243.4" x2="296.9" y2="241.8" stroke="#d890c8" stroke-width="0.6" opacity="0.6"/><line x1="297.4" y1="248.5" x2="300.0" y2="247.0" stroke="#d890c8" stroke-width="0.6" opacity="0.6"/><line x1="300.5" y1="253.7" x2="303.1" y2="252.1" stroke="#d890c8" stroke-width="0.6" opacity="0.6"/><line x1="303.6" y1="258.8" x2="306.2" y2="257.2" stroke="#d890c8" stroke-width="0.6" opacity="0.6"/><line x1="317" y1="214.8" x2="339.4" y2="249" stroke="#98b080" stroke-width="0.8" opacity="0.7"/><line x1="320.3" y1="219.8" x2="322.8" y2="218.2" stroke="#98b080" stroke-width="0.6" opacity="0.6"/><line x1="323.6" y1="224.8" x2="326.1" y2="223.2" stroke="#98b080" stroke-width="0.6" opacity="0.6"/><line x1="326.9" y1="229.9" x2="329.4" y2="228.2" stroke="#98b080" stroke-width="0.6" opacity="0.6"/><line x1="330.1" y1="234.9" x2="332.7" y2="233.2" stroke="#98b080" stroke-width="0.6" opacity="0.6"/><line x1="333.4" y1="239.9" x2="335.9" y2="238.3" stroke="#98b080" stroke-width="0.6" opacity="0.6"/><line x1="353" y1="187.4" x2="380.5" y2="221.6" stroke="#98b080" stroke-width="0.8" opacity="0.7"/><line x1="356.8" y1="192.1" x2="359.1" y2="190.2" stroke="#98b080" stroke-width="0.6" opacity="0.6"/><line x1="360.5" y1="196.8" x2="362.9" y2="194.9" stroke="#98b080" stroke-width="0.6" opacity="0.6"/><line x1="364.3" y1="201.4" x2="366.6" y2="199.5" stroke="#98b080" stroke-width="0.6" opacity="0.6"/><line x1="368.0" y1="206.1" x2="370.4" y2="204.2" stroke="#98b080" stroke-width="0.6" opacity="0.6"/><line x1="371.8" y1="210.8" x2="374.1" y2="208.9" stroke="#98b080" stroke-width="0.6" opacity="0.6"/><line x1="375.6" y1="215.5" x2="377.9" y2="213.6" stroke="#98b080" stroke-width="0.6" opacity="0.6"/><line x1="382" y1="163.4" x2="399" y2="196" stroke="#98b080" stroke-width="0.8" opacity="0.7"/><line x1="384.8" y1="168.7" x2="387.4" y2="167.3" stroke="#98b080" stroke-width="0.6" opacity="0.6"/><line x1="387.5" y1="174.0" x2="390.2" y2="172.7" stroke="#98b080" stroke-width="0.6" opacity="0.6"/><line x1="390.3" y1="179.4" x2="393.0" y2="178.0" stroke="#98b080" stroke-width="0.6" opacity="0.6"/><line x1="393.1" y1="184.7" x2="395.8" y2="183.3" stroke="#98b080" stroke-width="0.6" opacity="0.6"/><line x1="395.9" y1="190.0" x2="398.5" y2="188.6" stroke="#98b080" stroke-width="0.6" opacity="0.6"/><line x1="296" y1="218" x2="320" y2="256" stroke="#98b080" stroke-width="0.8" opacity="0.7"/><line x1="299.2" y1="223.1" x2="301.7" y2="221.5" stroke="#98b080" stroke-width="0.6" opacity="0.6"/><line x1="302.4" y1="228.1" x2="304.9" y2="226.5" stroke="#98b080" stroke-width="0.6" opacity="0.6"/><line x1="305.6" y1="233.2" x2="308.1" y2="231.6" stroke="#98b080" stroke-width="0.6" opacity="0.6"/><line x1="308.8" y1="238.3" x2="311.4" y2="236.7" stroke="#98b080" stroke-width="0.6" opacity="0.6"/><line x1="312.0" y1="243.4" x2="314.6" y2="241.8" stroke="#98b080" stroke-width="0.6" opacity="0.6"/><line x1="315.2" y1="248.4" x2="317.8" y2="246.8" stroke="#98b080" stroke-width="0.6" opacity="0.6"/><line x1="336" y1="200" x2="356" y2="232" stroke="#98b080" stroke-width="0.8" opacity="0.7"/><line x1="339.2" y1="205.1" x2="341.7" y2="203.5" stroke="#98b080" stroke-width="0.6" opacity="0.6"/><line x1="342.4" y1="210.2" x2="344.9" y2="208.6" stroke="#98b080" stroke-width="0.6" opacity="0.6"/><line x1="345.5" y1="215.3" x2="348.1" y2="213.7" stroke="#98b080" stroke-width="0.6" opacity="0.6"/><line x1="348.7" y1="220.4" x2="351.3" y2="218.8" stroke="#98b080" stroke-width="0.6" opacity="0.6"/><line x1="351.9" y1="225.4" x2="354.4" y2="223.8" stroke="#98b080" stroke-width="0.6" opacity="0.6"/><circle cx="247.7" cy="260.9" r="3" fill="#7eea78" stroke="#52cc52" stroke-width="0.7"/><path d="M246.29999999999998 259.7L248.89999999999998 262.29999999999995M247.89999999999998 259.4v2.6" stroke="#3caa3c" stroke-width="0.5"/><circle cx="252.8" cy="268.6" r="3" fill="#7eea78" stroke="#52cc52" stroke-width="0.7"/><path d="M251.4 267.40000000000003L254.0 270.0M253.0 267.1v2.6" stroke="#3caa3c" stroke-width="0.5"/><circle cx="257.7" cy="276.6" r="3" fill="#7eea78" stroke="#52cc52" stroke-width="0.7"/><path d="M256.3 275.40000000000003L258.9 278.0M257.9 275.1v2.6" stroke="#3caa3c" stroke-width="0.5"/><circle cx="262.7" cy="284" r="3" fill="#7eea78" stroke="#52cc52" stroke-width="0.7"/><path d="M261.3 282.8L263.9 285.4M262.9 282.5v2.6" stroke="#3caa3c" stroke-width="0.5"/><circle cx="265.1" cy="233.1" r="3" fill="#7eea78" stroke="#52cc52" stroke-width="0.7"/><path d="M263.70000000000005 231.9L266.3 234.5M265.3 231.6v2.6" stroke="#3caa3c" stroke-width="0.5"/><circle cx="268.8" cy="238.2" r="3" fill="#7eea78" stroke="#52cc52" stroke-width="0.7"/><path d="M267.40000000000003 237.0L270.0 239.6M269.0 236.7v2.6" stroke="#3caa3c" stroke-width="0.5"/><circle cx="272.8" cy="244.4" r="3" fill="#7eea78" stroke="#52cc52" stroke-width="0.7"/><path d="M271.40000000000003 243.20000000000002L274.0 245.8M273.0 242.9v2.6" stroke="#3caa3c" stroke-width="0.5"/><circle cx="275.9" cy="250.5" r="3" fill="#7eea78" stroke="#52cc52" stroke-width="0.7"/><path d="M274.5 249.3L277.09999999999997 251.9M276.09999999999997 249.0v2.6" stroke="#3caa3c" stroke-width="0.5"/><circle cx="280.8" cy="259.3" r="3" fill="#7eea78" stroke="#52cc52" stroke-width="0.7"/><path d="M279.40000000000003 258.1L282.0 260.7M281.0 257.8v2.6" stroke="#3caa3c" stroke-width="0.5"/><circle cx="284.2" cy="226.2" r="3" fill="#7eea78" stroke="#52cc52" stroke-width="0.7"/><path d="M282.8 225.0L285.4 227.6M284.4 224.7v2.6" stroke="#3caa3c" stroke-width="0.5"/><circle cx="288.9" cy="232.4" r="3" fill="#7eea78" stroke="#52cc52" stroke-width="0.7"/><path d="M287.5 231.20000000000002L290.09999999999997 233.8M289.09999999999997 230.9v2.6" stroke="#3caa3c" stroke-width="0.5"/><circle cx="291.6" cy="239.3" r="3" fill="#7eea78" stroke="#52cc52" stroke-width="0.7"/><path d="M290.20000000000005 238.10000000000002L292.8 240.70000000000002M291.8 237.8v2.6" stroke="#3caa3c" stroke-width="0.5"/><circle cx="294.7" cy="246.2" r="3" fill="#7eea78" stroke="#52cc52" stroke-width="0.7"/><path d="M293.3 245.0L295.9 247.6M294.9 244.7v2.6" stroke="#3caa3c" stroke-width="0.5"/><circle cx="297.8" cy="253.9" r="3" fill="#7eea78" stroke="#52cc52" stroke-width="0.7"/><path d="M296.40000000000003 252.70000000000002L299.0 255.3M298.0 252.4v2.6" stroke="#3caa3c" stroke-width="0.5"/><circle cx="310.4" cy="260.9" r="3" fill="#7eea78" stroke="#52cc52" stroke-width="0.7"/><path d="M309.0 259.7L311.59999999999997 262.29999999999995M310.59999999999997 259.4v2.6" stroke="#3caa3c" stroke-width="0.5"/><circle cx="300.1" cy="221.3" r="3" fill="#7eea78" stroke="#52cc52" stroke-width="0.7"/><path d="M298.70000000000005 220.10000000000002L301.3 222.70000000000002M300.3 219.8v2.6" stroke="#3caa3c" stroke-width="0.5"/><circle cx="303.2" cy="227" r="3" fill="#7eea78" stroke="#52cc52" stroke-width="0.7"/><path d="M301.8 225.8L304.4 228.4M303.4 225.5v2.6" stroke="#3caa3c" stroke-width="0.5"/><circle cx="306.7" cy="232.4" r="3" fill="#7eea78" stroke="#52cc52" stroke-width="0.7"/><path d="M305.3 231.20000000000002L307.9 233.8M306.9 230.9v2.6" stroke="#3caa3c" stroke-width="0.5"/><circle cx="310.4" cy="238.5" r="3" fill="#7eea78" stroke="#52cc52" stroke-width="0.7"/><path d="M309.0 237.3L311.59999999999997 239.9M310.59999999999997 237.0v2.6" stroke="#3caa3c" stroke-width="0.5"/><circle cx="325.7" cy="203.7" r="3" fill="#7eea78" stroke="#52cc52" stroke-width="0.7"/><path d="M324.3 202.5L326.9 205.1M325.9 202.2v2.6" stroke="#3caa3c" stroke-width="0.5"/><circle cx="329.5" cy="208.8" r="3" fill="#7eea78" stroke="#52cc52" stroke-width="0.7"/><path d="M328.1 207.60000000000002L330.7 210.20000000000002M329.7 207.3v2.6" stroke="#3caa3c" stroke-width="0.5"/><circle cx="333.4" cy="214.5" r="3" fill="#7eea78" stroke="#52cc52" stroke-width="0.7"/><path d="M332.0 213.3L334.59999999999997 215.9M333.59999999999997 213.0v2.6" stroke="#3caa3c" stroke-width="0.5"/><circle cx="338" cy="220" r="3" fill="#7eea78" stroke="#52cc52" stroke-width="0.7"/><path d="M336.6 218.8L339.2 221.4M338.2 218.5v2.6" stroke="#3caa3c" stroke-width="0.5"/><circle cx="339" cy="195.1" r="3" fill="#7eea78" stroke="#52cc52" stroke-width="0.7"/><path d="M337.6 193.9L340.2 196.5M339.2 193.6v2.6" stroke="#3caa3c" stroke-width="0.5"/><circle cx="344.9" cy="201.1" r="3" fill="#7eea78" stroke="#52cc52" stroke-width="0.7"/><path d="M343.5 199.9L346.09999999999997 202.5M345.09999999999997 199.6v2.6" stroke="#3caa3c" stroke-width="0.5"/><circle cx="350.5" cy="206.6" r="3" fill="#7eea78" stroke="#52cc52" stroke-width="0.7"/><path d="M349.1 205.4L351.7 208.0M350.7 205.1v2.6" stroke="#3caa3c" stroke-width="0.5"/><circle cx="356.2" cy="211.7" r="3" fill="#7eea78" stroke="#52cc52" stroke-width="0.7"/><path d="M354.8 210.5L357.4 213.1M356.4 210.2v2.6" stroke="#3caa3c" stroke-width="0.5"/><circle cx="357.9" cy="229.3" r="3" fill="#7eea78" stroke="#52cc52" stroke-width="0.7"/><path d="M356.5 228.10000000000002L359.09999999999997 230.70000000000002M358.09999999999997 227.8v2.6" stroke="#3caa3c" stroke-width="0.5"/><circle cx="372.8" cy="160" r="3" fill="#7eea78" stroke="#52cc52" stroke-width="0.7"/><path d="M371.40000000000003 158.8L374.0 161.4M373.0 158.5v2.6" stroke="#3caa3c" stroke-width="0.5"/><circle cx="376.7" cy="164.3" r="3" fill="#7eea78" stroke="#52cc52" stroke-width="0.7"/><path d="M375.3 163.10000000000002L377.9 165.70000000000002M376.9 162.8v2.6" stroke="#3caa3c" stroke-width="0.5"/><circle cx="380.5" cy="170.3" r="3" fill="#7eea78" stroke="#52cc52" stroke-width="0.7"/><path d="M379.1 169.10000000000002L381.7 171.70000000000002M380.7 168.8v2.6" stroke="#3caa3c" stroke-width="0.5"/><circle cx="383" cy="175.4" r="3" fill="#7eea78" stroke="#52cc52" stroke-width="0.7"/><path d="M381.6 174.20000000000002L384.2 176.8M383.2 173.9v2.6" stroke="#3caa3c" stroke-width="0.5"/><circle cx="386.5" cy="180.5" r="3" fill="#7eea78" stroke="#52cc52" stroke-width="0.7"/><path d="M385.1 179.3L387.7 181.9M386.7 179.0v2.6" stroke="#3caa3c" stroke-width="0.5"/><circle cx="390.4" cy="186.5" r="3" fill="#7eea78" stroke="#52cc52" stroke-width="0.7"/><path d="M389.0 185.3L391.59999999999997 187.9M390.59999999999997 185.0v2.6" stroke="#3caa3c" stroke-width="0.5"/><circle cx="393.8" cy="193.4" r="3" fill="#7eea78" stroke="#52cc52" stroke-width="0.7"/><path d="M392.40000000000003 192.20000000000002L395.0 194.8M394.0 191.9v2.6" stroke="#3caa3c" stroke-width="0.5"/><circle cx="385.7" cy="253.5" r="3" fill="#7eea78" stroke="#52cc52" stroke-width="0.7"/><path d="M384.3 252.3L386.9 254.9M385.9 252.0v2.6" stroke="#3caa3c" stroke-width="0.5"/><circle cx="374.4" cy="261.4" r="3" fill="#7eea78" stroke="#52cc52" stroke-width="0.7"/><path d="M373.0 260.2L375.59999999999997 262.79999999999995M374.59999999999997 259.9v2.6" stroke="#3caa3c" stroke-width="0.5"/><circle cx="367.8" cy="265.2" r="3" fill="#7eea78" stroke="#52cc52" stroke-width="0.7"/><path d="M366.40000000000003 264.0L369.0 266.59999999999997M368.0 263.7v2.6" stroke="#3caa3c" stroke-width="0.5"/><circle cx="402.6" cy="267.5" r="3" fill="#7eea78" stroke="#52cc52" stroke-width="0.7"/><path d="M401.20000000000005 266.3L403.8 268.9M402.8 266.0v2.6" stroke="#3caa3c" stroke-width="0.5"/><circle cx="392.3" cy="275" r="3" fill="#7eea78" stroke="#52cc52" stroke-width="0.7"/><path d="M390.90000000000003 273.8L393.5 276.4M392.5 273.5v2.6" stroke="#3caa3c" stroke-width="0.5"/><circle cx="383.8" cy="279.9" r="3" fill="#7eea78" stroke="#52cc52" stroke-width="0.7"/><path d="M382.40000000000003 278.7L385.0 281.29999999999995M384.0 278.4v2.6" stroke="#3caa3c" stroke-width="0.5"/><circle cx="373.4" cy="286.3" r="3" fill="#7eea78" stroke="#52cc52" stroke-width="0.7"/><path d="M372.0 285.1L374.59999999999997 287.7M373.59999999999997 284.8v2.6" stroke="#3caa3c" stroke-width="0.5"/><circle cx="364" cy="292.5" r="3" fill="#7eea78" stroke="#52cc52" stroke-width="0.7"/><path d="M362.6 291.3L365.2 293.9M364.2 291.0v2.6" stroke="#3caa3c" stroke-width="0.5"/><circle cx="356.1" cy="297.6" r="3" fill="#7eea78" stroke="#52cc52" stroke-width="0.7"/><path d="M354.70000000000005 296.40000000000003L357.3 299.0M356.3 296.1v2.6" stroke="#3caa3c" stroke-width="0.5"/><circle cx="348.6" cy="302.5" r="3" fill="#7eea78" stroke="#52cc52" stroke-width="0.7"/><path d="M347.20000000000005 301.3L349.8 303.9M348.8 301.0v2.6" stroke="#3caa3c" stroke-width="0.5"/><circle cx="341" cy="308.1" r="3" fill="#7eea78" stroke="#52cc52" stroke-width="0.7"/><path d="M339.6 306.90000000000003L342.2 309.5M341.2 306.6v2.6" stroke="#3caa3c" stroke-width="0.5"/><circle cx="333.5" cy="312.7" r="3" fill="#7eea78" stroke="#52cc52" stroke-width="0.7"/><path d="M332.1 311.5L334.7 314.09999999999997M333.7 311.2v2.6" stroke="#3caa3c" stroke-width="0.5"/><circle cx="345.2" cy="280.3" r="3" fill="#7eea78" stroke="#52cc52" stroke-width="0.7"/><path d="M343.8 279.1L346.4 281.7M345.4 278.8v2.6" stroke="#3caa3c" stroke-width="0.5"/><circle cx="336.7" cy="286.9" r="3" fill="#7eea78" stroke="#52cc52" stroke-width="0.7"/><path d="M335.3 285.7L337.9 288.29999999999995M336.9 285.4v2.6" stroke="#3caa3c" stroke-width="0.5"/><circle cx="325.4" cy="293.8" r="3" fill="#7eea78" stroke="#52cc52" stroke-width="0.7"/><path d="M324.0 292.6L326.59999999999997 295.2M325.59999999999997 292.3v2.6" stroke="#3caa3c" stroke-width="0.5"/><circle cx="333.5" cy="295.7" r="3" fill="#7eea78" stroke="#52cc52" stroke-width="0.7"/><path d="M332.1 294.5L334.7 297.09999999999997M333.7 294.2v2.6" stroke="#3caa3c" stroke-width="0.5"/><circle cx="326.4" cy="301" r="3" fill="#7eea78" stroke="#52cc52" stroke-width="0.7"/><path d="M325.0 299.8L327.59999999999997 302.4M326.59999999999997 299.5v2.6" stroke="#3caa3c" stroke-width="0.5"/><circle cx="405.6" cy="240.2" r="3" fill="#7eea78" stroke="#52cc52" stroke-width="0.7"/><path d="M404.20000000000005 239.0L406.8 241.6M405.8 238.7v2.6" stroke="#3caa3c" stroke-width="0.5"/><circle cx="413.8" cy="235.1" r="3" fill="#7eea78" stroke="#52cc52" stroke-width="0.7"/><path d="M412.40000000000003 233.9L415.0 236.5M414.0 233.6v2.6" stroke="#3caa3c" stroke-width="0.5"/><circle cx="420.3" cy="230.8" r="3" fill="#7eea78" stroke="#52cc52" stroke-width="0.7"/><path d="M418.90000000000003 229.60000000000002L421.5 232.20000000000002M420.5 229.3v2.6" stroke="#3caa3c" stroke-width="0.5"/><circle cx="402.2" cy="267.1" r="3" fill="#7eea78" stroke="#52cc52" stroke-width="0.7"/><path d="M400.8 265.90000000000003L403.4 268.5M402.4 265.6v2.6" stroke="#3caa3c" stroke-width="0.5"/><circle cx="425.8" cy="253.4" r="3" fill="#7eea78" stroke="#52cc52" stroke-width="0.7"/><path d="M424.40000000000003 252.20000000000002L427.0 254.8M426.0 251.9v2.6" stroke="#3caa3c" stroke-width="0.5"/><circle cx="430.1" cy="251" r="3" fill="#7eea78" stroke="#52cc52" stroke-width="0.7"/><path d="M428.70000000000005 249.8L431.3 252.4M430.3 249.5v2.6" stroke="#3caa3c" stroke-width="0.5"/><circle cx="433.5" cy="248.8" r="3" fill="#7eea78" stroke="#52cc52" stroke-width="0.7"/><path d="M432.1 247.60000000000002L434.7 250.20000000000002M433.7 247.3v2.6" stroke="#3caa3c" stroke-width="0.5"/><circle cx="433.5" cy="264.2" r="3" fill="#7eea78" stroke="#52cc52" stroke-width="0.7"/><path d="M432.1 263.0L434.7 265.59999999999997M433.7 262.7v2.6" stroke="#3caa3c" stroke-width="0.5"/><circle cx="437.5" cy="261.6" r="3" fill="#7eea78" stroke="#52cc52" stroke-width="0.7"/><path d="M436.1 260.40000000000003L438.7 263.0M437.7 260.1v2.6" stroke="#3caa3c" stroke-width="0.5"/><circle cx="441.2" cy="259.6" r="3" fill="#7eea78" stroke="#52cc52" stroke-width="0.7"/><path d="M439.8 258.40000000000003L442.4 261.0M441.4 258.1v2.6" stroke="#3caa3c" stroke-width="0.5"/><circle cx="445.5" cy="256.5" r="3" fill="#7eea78" stroke="#52cc52" stroke-width="0.7"/><path d="M444.1 255.3L446.7 257.9M445.7 255.0v2.6" stroke="#3caa3c" stroke-width="0.5"/><circle cx="436.1" cy="276.2" r="3" fill="#7eea78" stroke="#52cc52" stroke-width="0.7"/><path d="M434.70000000000005 275.0L437.3 277.59999999999997M436.3 274.7v2.6" stroke="#3caa3c" stroke-width="0.5"/><circle cx="440.4" cy="274" r="3" fill="#7eea78" stroke="#52cc52" stroke-width="0.7"/><path d="M439.0 272.8L441.59999999999997 275.4M440.59999999999997 272.5v2.6" stroke="#3caa3c" stroke-width="0.5"/><circle cx="444.7" cy="271.6" r="3" fill="#7eea78" stroke="#52cc52" stroke-width="0.7"/><path d="M443.3 270.40000000000003L445.9 273.0M444.9 270.1v2.6" stroke="#3caa3c" stroke-width="0.5"/><circle cx="448.9" cy="268.5" r="3" fill="#7eea78" stroke="#52cc52" stroke-width="0.7"/><path d="M447.5 267.3L450.09999999999997 269.9M449.09999999999997 267.0v2.6" stroke="#3caa3c" stroke-width="0.5"/><circle cx="350.9" cy="89.4" r="3" fill="#7eea78" stroke="#52cc52" stroke-width="0.7"/><path d="M349.5 88.2L352.09999999999997 90.80000000000001M351.09999999999997 87.9v2.6" stroke="#3caa3c" stroke-width="0.5"/><circle cx="354.6" cy="96.8" r="3" fill="#7eea78" stroke="#52cc52" stroke-width="0.7"/><path d="M353.20000000000005 95.6L355.8 98.2M354.8 95.3v2.6" stroke="#3caa3c" stroke-width="0.5"/><circle cx="358" cy="106.2" r="3" fill="#7eea78" stroke="#52cc52" stroke-width="0.7"/><path d="M356.6 105.0L359.2 107.60000000000001M358.2 104.7v2.6" stroke="#3caa3c" stroke-width="0.5"/><circle cx="140" cy="159" r="3" fill="#7eea78" stroke="#52cc52" stroke-width="0.7"/><path d="M138.6 157.8L141.2 160.4M140.2 157.5v2.6" stroke="#3caa3c" stroke-width="0.5"/><circle cx="145" cy="166" r="3" fill="#7eea78" stroke="#52cc52" stroke-width="0.7"/><path d="M143.6 164.8L146.2 167.4M145.2 164.5v2.6" stroke="#3caa3c" stroke-width="0.5"/><circle cx="149" cy="173" r="3" fill="#7eea78" stroke="#52cc52" stroke-width="0.7"/><path d="M147.6 171.8L150.2 174.4M149.2 171.5v2.6" stroke="#3caa3c" stroke-width="0.5"/><circle cx="153" cy="179" r="3" fill="#7eea78" stroke="#52cc52" stroke-width="0.7"/><path d="M151.6 177.8L154.2 180.4M153.2 177.5v2.6" stroke="#3caa3c" stroke-width="0.5"/><circle cx="161" cy="191" r="3" fill="#7eea78" stroke="#52cc52" stroke-width="0.7"/><path d="M159.6 189.8L162.2 192.4M161.2 189.5v2.6" stroke="#3caa3c" stroke-width="0.5"/><circle cx="165" cy="196.5" r="3" fill="#7eea78" stroke="#52cc52" stroke-width="0.7"/><path d="M163.6 195.3L166.2 197.9M165.2 195.0v2.6" stroke="#3caa3c" stroke-width="0.5"/><circle cx="171.5" cy="208" r="3" fill="#7eea78" stroke="#52cc52" stroke-width="0.7"/><path d="M170.1 206.8L172.7 209.4M171.7 206.5v2.6" stroke="#3caa3c" stroke-width="0.5"/><circle cx="179" cy="217.7" r="3" fill="#7eea78" stroke="#52cc52" stroke-width="0.7"/><path d="M177.6 216.5L180.2 219.1M179.2 216.2v2.6" stroke="#3caa3c" stroke-width="0.5"/><circle cx="183" cy="223.7" r="3" fill="#7eea78" stroke="#52cc52" stroke-width="0.7"/><path d="M181.6 222.5L184.2 225.1M183.2 222.2v2.6" stroke="#3caa3c" stroke-width="0.5"/><circle cx="187" cy="229.7" r="3" fill="#7eea78" stroke="#52cc52" stroke-width="0.7"/><path d="M185.6 228.5L188.2 231.1M187.2 228.2v2.6" stroke="#3caa3c" stroke-width="0.5"/><circle cx="193.5" cy="239" r="3" fill="#7eea78" stroke="#52cc52" stroke-width="0.7"/><path d="M192.1 237.8L194.7 240.4M193.7 237.5v2.6" stroke="#3caa3c" stroke-width="0.5"/><circle cx="199" cy="249" r="3" fill="#7eea78" stroke="#52cc52" stroke-width="0.7"/><path d="M197.6 247.8L200.2 250.4M199.2 247.5v2.6" stroke="#3caa3c" stroke-width="0.5"/><circle cx="203" cy="254.5" r="3" fill="#7eea78" stroke="#52cc52" stroke-width="0.7"/><path d="M201.6 253.3L204.2 255.9M203.2 253.0v2.6" stroke="#3caa3c" stroke-width="0.5"/><circle cx="207" cy="260" r="3" fill="#7eea78" stroke="#52cc52" stroke-width="0.7"/><path d="M205.6 258.8L208.2 261.4M207.2 258.5v2.6" stroke="#3caa3c" stroke-width="0.5"/><circle cx="213.7" cy="270.7" r="3" fill="#7eea78" stroke="#52cc52" stroke-width="0.7"/><path d="M212.29999999999998 269.5L214.89999999999998 272.09999999999997M213.89999999999998 269.2v2.6" stroke="#3caa3c" stroke-width="0.5"/><circle cx="157" cy="110" r="3" fill="#7eea78" stroke="#52cc52" stroke-width="0.7"/><path d="M155.6 108.8L158.2 111.4M157.2 108.5v2.6" stroke="#3caa3c" stroke-width="0.5"/><circle cx="341.6" cy="229.3" r="4.9" fill="#7eea78" stroke="#52cc52" stroke-width="0.7"/><path d="M339.20000000000005 227.3L343.6 231.70000000000002M341.90000000000003 226.70000000000002v4.6" stroke="#3caa3c" stroke-width="0.6"/><circle cx="362.8" cy="220.8" r="4.9" fill="#7eea78" stroke="#52cc52" stroke-width="0.7"/><path d="M360.40000000000003 218.8L364.8 223.20000000000002M363.1 218.20000000000002v4.6" stroke="#3caa3c" stroke-width="0.6"/><circle cx="316.5" cy="246.5" r="4.9" fill="#7eea78" stroke="#52cc52" stroke-width="0.7"/><path d="M314.1 244.5L318.5 248.9M316.8 243.9v4.6" stroke="#3caa3c" stroke-width="0.6"/><circle cx="437.5" cy="244.9" r="4.9" fill="#7eea78" stroke="#52cc52" stroke-width="0.7"/><path d="M435.1 242.9L439.5 247.3M437.8 242.3v4.6" stroke="#3caa3c" stroke-width="0.6"/><circle cx="304.3" cy="200.2" r="3" fill="#e8a8e8" stroke="#d070d0" stroke-width="0.8"/><circle cx="375" cy="317" r="0.7" fill="#c060c0"/><rect x="67.8" y="78.7" width="2" height="2" fill="#9a8430"/><rect x="74.2" y="75.0" width="2" height="2" fill="#9a8430"/><rect x="355.7" y="521.6" width="2" height="2" fill="#9a8430"/><rect x="349.4" y="525.5" width="2" height="2" fill="#9a8430"/><rect x="52.7" y="82.7" width="2" height="2" fill="#9a8430"/><rect x="48.3" y="75.8" width="2" height="2" fill="#9a8430"/><rect x="64.3" y="65.6" width="2" height="2" fill="#9a8430"/><rect x="68.7" y="72.5" width="2" height="2" fill="#9a8430"/><rect x="347.0" y="542.7" width="2" height="2" fill="#9a8430"/><rect x="342.5" y="535.8" width="2" height="2" fill="#9a8430"/><rect x="369.1" y="518.8" width="2" height="2" fill="#9a8430"/><rect x="373.5" y="525.7" width="2" height="2" fill="#9a8430"/><rect x="250.7" y="396.2" width="2" height="2" fill="#9a8430"/><rect x="250.7" y="389.6" width="2" height="2" fill="#9a8430"/><rect x="260.5" y="389.6" width="2" height="2" fill="#9a8430"/><rect x="260.5" y="396.2" width="2" height="2" fill="#9a8430"/><rect x="286.3" y="451.7" width="2" height="2" fill="#9a8430"/><rect x="286.2" y="445.1" width="2" height="2" fill="#9a8430"/><rect x="295.8" y="444.9" width="2" height="2" fill="#9a8430"/><rect x="295.9" y="451.5" width="2" height="2" fill="#9a8430"/><rect x="115.3" y="165.4" width="2" height="2" fill="#9a8430"/><rect x="121.9" y="165.0" width="2" height="2" fill="#9a8430"/><rect x="121.1" y="182.3" width="2" height="2" fill="#9a8430"/><rect x="114.5" y="182.0" width="2" height="2" fill="#9a8430"/><rect x="138.5" y="201.6" width="2" height="2" fill="#9a8430"/><rect x="145.1" y="201.2" width="2" height="2" fill="#9a8430"/><rect x="144.9" y="220.1" width="2" height="2" fill="#9a8430"/><rect x="138.3" y="220.0" width="2" height="2" fill="#9a8430"/><rect x="173.0" y="255.5" width="2" height="2" fill="#9a8430"/><rect x="179.6" y="255.1" width="2" height="2" fill="#9a8430"/><rect x="181.3" y="277.9" width="2" height="2" fill="#9a8430"/><rect x="174.8" y="278.4" width="2" height="2" fill="#9a8430"/><rect x="143.7" y="154.1" width="2" height="2" fill="#9a8430"/><rect x="149.3" y="150.5" width="2" height="2" fill="#9a8430"/><rect x="259.0" y="297.0" width="2" height="2" fill="#9a8430"/><rect x="256.0" y="302.8" width="2" height="2" fill="#9a8430"/><rect x="106.7" y="70.9" width="2" height="2" fill="#9a8430"/><rect x="112.9" y="66.9" width="2" height="2" fill="#9a8430"/><rect x="310.9" y="370.0" width="2" height="2" fill="#9a8430"/><rect x="304.7" y="374.0" width="2" height="2" fill="#9a8430"/><rect x="151.2" y="142.5" width="2" height="2" fill="#9a8430"/><rect x="147.7" y="136.9" width="2" height="2" fill="#9a8430"/><rect x="144.5" y="138.9" width="2" height="2" fill="#9a8430"/><rect x="148.1" y="144.5" width="2" height="2" fill="#9a8430"/><rect x="173.3" y="177.0" width="2" height="2" fill="#9a8430"/><rect x="169.8" y="171.4" width="2" height="2" fill="#9a8430"/><rect x="166.8" y="173.3" width="2" height="2" fill="#9a8430"/><rect x="170.4" y="178.9" width="2" height="2" fill="#9a8430"/><rect x="192.2" y="206.5" width="2" height="2" fill="#9a8430"/><rect x="188.6" y="200.9" width="2" height="2" fill="#9a8430"/><rect x="186.5" y="202.3" width="2" height="2" fill="#9a8430"/><rect x="190.1" y="207.9" width="2" height="2" fill="#9a8430"/><rect x="211.6" y="236.8" width="2" height="2" fill="#9a8430"/><rect x="208.0" y="231.3" width="2" height="2" fill="#9a8430"/><rect x="206.8" y="232.1" width="2" height="2" fill="#9a8430"/><rect x="210.3" y="237.6" width="2" height="2" fill="#9a8430"/><rect x="226.7" y="260.4" width="2" height="2" fill="#9a8430"/><rect x="223.1" y="254.8" width="2" height="2" fill="#9a8430"/><rect x="221.9" y="255.6" width="2" height="2" fill="#9a8430"/><rect x="225.5" y="261.1" width="2" height="2" fill="#9a8430"/><rect x="255.9" y="304.2" width="2" height="2" fill="#9a8430"/><rect x="258.3" y="310.4" width="2" height="2" fill="#9a8430"/><rect x="232.8" y="320.3" width="2" height="2" fill="#9a8430"/><rect x="230.4" y="314.1" width="2" height="2" fill="#9a8430"/><rect x="262.4" y="316.8" width="2" height="2" fill="#9a8430"/><rect x="265.2" y="322.8" width="2" height="2" fill="#9a8430"/><rect x="212.8" y="337.5" width="2" height="2" fill="#9a8430"/><rect x="213.0" y="330.9" width="2" height="2" fill="#9a8430"/><rect x="384.5" y="62.4" width="2" height="2" fill="#9a8430"/><rect x="388.2" y="68.8" width="2" height="2" fill="#9a8430"/><rect x="697.6" y="532.0" width="2" height="2" fill="#9a8430"/><rect x="701.7" y="538.2" width="2" height="2" fill="#9a8430"/><rect x="435.0" y="202.5" width="2" height="2" fill="#9a8430"/><rect x="430.6" y="197.6" width="2" height="2" fill="#9a8430"/><rect x="458.2" y="172.7" width="2" height="2" fill="#9a8430"/><rect x="462.6" y="177.6" width="2" height="2" fill="#9a8430"/><rect x="436.8" y="212.2" width="2" height="2" fill="#9a8430"/><rect x="437.4" y="205.6" width="2" height="2" fill="#9a8430"/><rect x="490.4" y="210.5" width="2" height="2" fill="#9a8430"/><rect x="489.8" y="217.1" width="2" height="2" fill="#9a8430"/><rect x="281.2" y="314.0" width="2" height="2" fill="#9a8430"/><rect x="277.3" y="307.7" width="2" height="2" fill="#9a8430"/><rect x="422.1" y="217.7" width="2" height="2" fill="#9a8430"/><rect x="429.2" y="219.8" width="2" height="2" fill="#9a8430"/><rect x="457.8" y="263.5" width="2" height="2" fill="#9a8430"/><rect x="460.3" y="268.7" width="2" height="2" fill="#9a8430"/><rect x="466.4" y="265.7" width="2" height="2" fill="#9a8430"/><rect x="463.9" y="260.5" width="2" height="2" fill="#9a8430"/><rect x="510.1" y="291.3" width="2" height="2" fill="#9a8430"/><rect x="509.4" y="284.8" width="2" height="2" fill="#9a8430"/><rect x="534.8" y="281.9" width="2" height="2" fill="#9a8430"/><rect x="535.5" y="288.4" width="2" height="2" fill="#9a8430"/><rect x="508.0" y="282.8" width="2" height="2" fill="#9a8430"/><rect x="502.3" y="279.6" width="2" height="2" fill="#9a8430"/><rect x="514.2" y="258.2" width="2" height="2" fill="#9a8430"/><rect x="519.9" y="261.4" width="2" height="2" fill="#9a8430"/><rect x="593.5" y="419.0" width="2" height="2" fill="#9a8430"/><rect x="587.8" y="415.7" width="2" height="2" fill="#9a8430"/><rect x="601.7" y="392.2" width="2" height="2" fill="#9a8430"/><rect x="607.4" y="395.5" width="2" height="2" fill="#9a8430"/><rect x="595.6" y="426.6" width="2" height="2" fill="#9a8430"/><rect x="594.3" y="420.1" width="2" height="2" fill="#9a8430"/><rect x="621.6" y="414.6" width="2" height="2" fill="#9a8430"/><rect x="622.9" y="421.1" width="2" height="2" fill="#9a8430"/><rect x="379.7" y="134.9" width="2" height="2" fill="#9a8430"/><rect x="383.1" y="140.6" width="2" height="2" fill="#9a8430"/><rect x="382.4" y="139.9" width="2" height="2" fill="#9a8430"/><rect x="376.7" y="136.6" width="2" height="2" fill="#9a8430"/><!--DETAILS--></svg>
<span class="lab" style="left:2.5px;top:10.6px">N55° 25'20"</span><span class="lab" style="left:2.5px;top:107.6px">N55° 25'</span><span class="lab" style="left:2.5px;top:205.6px">N55° 24'40"</span><span class="lab" style="left:2.5px;top:303.1px">N55° 24'20"</span><span class="lab" style="left:2.5px;top:400.6px">N55° 24'</span><span class="lab" style="left:2.5px;top:497.6px">N55° 23'40"</span><span class="lab" style="left:43.5px;top:499.9px">E37° 53'30"</span><span class="lab" style="left:126.5px;top:499.9px">E37° 53'</span><span class="lab" style="left:209.5px;top:499.9px">E37° 53'30"</span><span class="lab" style="left:292.5px;top:499.9px">E37° 54'</span><span class="lab" style="left:375.5px;top:499.9px">E37° 54'30"</span><span class="lab" style="left:458.5px;top:499.9px">E37° 55'</span><span class="lab" style="left:541.5px;top:499.9px">E37° 55'30"</span><span class="lab" style="left:625.5px;top:499.9px">E37° 56'</span><span class="lab" style="left:708.5px;top:499.9px">E37° 56'30"</span><div class="a" style="left:0;top:0;width:750px;height:1px;background:#8c8a7c"></div><div class="a" style="left:0;top:0;width:1px;height:510px;background:#8a8878"></div><div class="a" style="left:1px;top:1px;width:1px;height:509px;background:#dedbcc"></div><div class="a" style="left:748px;top:1px;width:2px;height:509px;background:#e6e4d8"></div><div class="a" style="left:0;top:509px;width:750px;height:1px;background:#f4f2e8"></div>
</div>
<div id="status" class="a">
  <span style="left:1px;top:1.5px;font-size:7.2px">Ready</span>
  <div class="a pan" style="left:581px;width:68px"><span style="left:1.5px;top:0px">N55° 24.5900'</span></div>
  <div class="a pan" style="left:650.5px;width:61px"><span style="left:1.5px;top:0px">E37° 54.2181'</span></div>
  <div class="a pan" style="left:713px;width:37px"><span style="left:1.5px;top:0px">0.0°</span></div>
</div>
<div id="task" class="a"><div class="a" style="left:0;top:0;width:53px;height:3px;background:linear-gradient(#5ab05a,#3c9a3c)"></div></div>
</body></html>
